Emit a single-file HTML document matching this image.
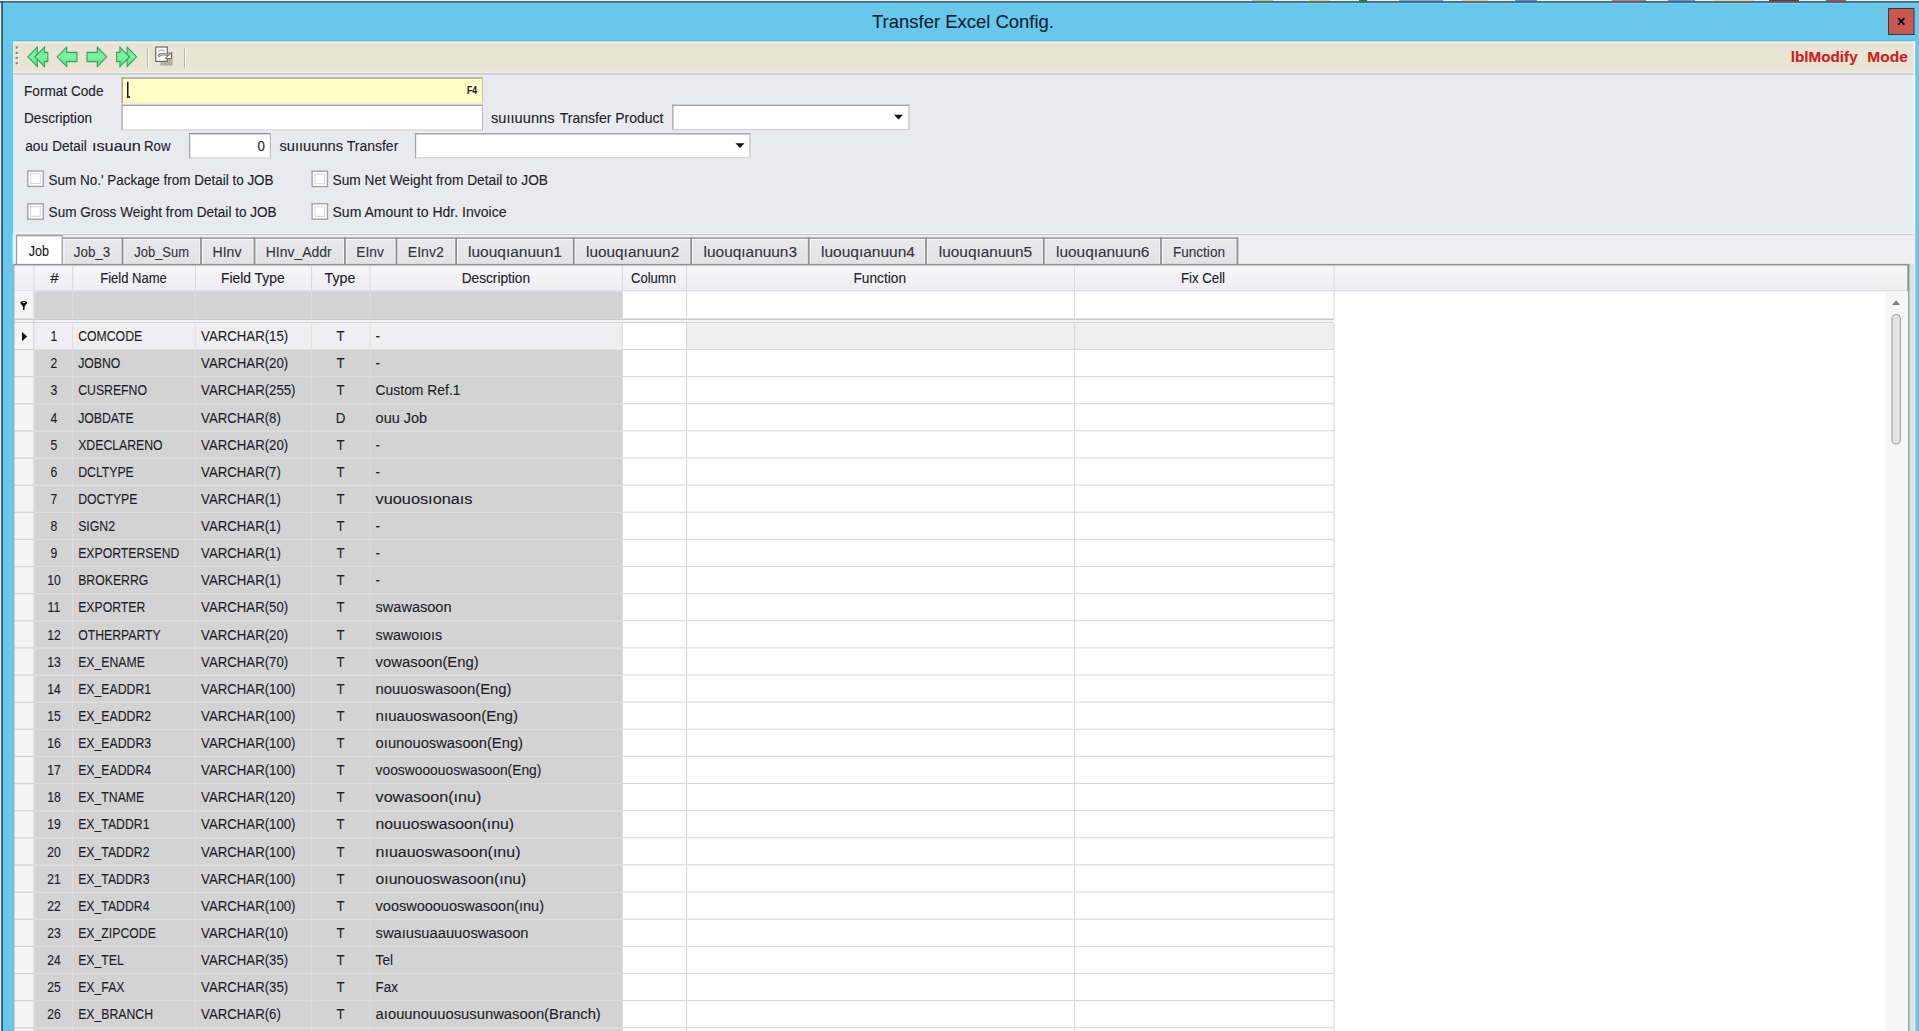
<!DOCTYPE html>
<html><head><meta charset="utf-8"><title>Transfer Excel Config.</title>
<style>html,body{margin:0;padding:0;overflow:hidden;background:#67c8eb}svg{display:block}text{font-family:"Liberation Sans", sans-serif;white-space:pre}</style>
</head><body>
<svg width="1919" height="1031" viewBox="0 0 1919 1031">
<rect x="0" y="0" width="1919" height="1031" fill="#67c8eb" />
<rect x="0" y="0" width="1919" height="1.4" fill="#eceef0" />
<rect x="0" y="0" width="1.4" height="1031" fill="#e6e8ea" />
<rect x="1252" y="0" width="21" height="1.4" fill="#b9c98a" />
<rect x="1309" y="0" width="20" height="1.4" fill="#e0d080" />
<rect x="1359" y="0" width="8" height="1.4" fill="#2a7a3a" />
<rect x="1399" y="0" width="44" height="1.4" fill="#7aa0d0" />
<rect x="1462" y="0" width="26" height="1.4" fill="#e4d28a" />
<rect x="1515" y="0" width="22" height="1.4" fill="#5a88c8" />
<rect x="1612" y="0" width="34" height="1.4" fill="#c87088" />
<rect x="1668" y="0" width="27" height="1.4" fill="#6a90c8" />
<rect x="1713" y="0" width="41" height="1.4" fill="#e8d890" />
<rect x="1769" y="0" width="30" height="1.4" fill="#9a2a2a" />
<rect x="1826" y="0" width="20" height="1.4" fill="#c04848" />
<rect x="0" y="1.3" width="1919" height="1.5" fill="#25485c" />
<rect x="3" y="2.8" width="1916" height="0.9" fill="#82d6f2" />
<rect x="1.3" y="1.3" width="1.5" height="1031" fill="#25485c" />
<rect x="1888.5" y="8.5" width="25.5" height="26" fill="#c9594e" stroke="#3a3a3a" stroke-width="1"/>
<path d="M1898.2 18.2 L1904.3 24.6 M1904.3 18.2 L1898.2 24.6" stroke="#000" stroke-width="1.9" stroke-linecap="butt"/>
<rect x="13" y="40.5" width="1902" height="1.5" fill="#5ab2d6" />
<rect x="13" y="41.3" width="1902" height="2.5" fill="#eef4ee" />
<rect x="13" y="42.8" width="1902" height="30" fill="#e9e4d3" />
<rect x="13" y="71.6" width="1902" height="2.4" fill="#f1f0ea" />
<rect x="13" y="73.2" width="1902" height="2.4" fill="#c4c5ca" />
<rect x="1913.2" y="41" width="2" height="34" fill="#f4f6f2" />
<rect x="15.8" y="46.5" width="2" height="2" fill="#8a8a8a" />
<rect x="16.8" y="47.5" width="2" height="2" fill="#ffffff" opacity="0.7"/>
<rect x="15.8" y="46.5" width="2" height="2" fill="#8a8a8a" />
<rect x="15.8" y="52" width="2" height="2" fill="#8a8a8a" />
<rect x="16.8" y="53" width="2" height="2" fill="#ffffff" opacity="0.7"/>
<rect x="15.8" y="52" width="2" height="2" fill="#8a8a8a" />
<rect x="15.8" y="57" width="2" height="2" fill="#8a8a8a" />
<rect x="16.8" y="58" width="2" height="2" fill="#ffffff" opacity="0.7"/>
<rect x="15.8" y="57" width="2" height="2" fill="#8a8a8a" />
<rect x="15.8" y="62.2" width="2" height="2" fill="#8a8a8a" />
<rect x="16.8" y="63.2" width="2" height="2" fill="#ffffff" opacity="0.7"/>
<rect x="15.8" y="62.2" width="2" height="2" fill="#8a8a8a" />
<path d="M27.8 56.8 L37.3 47.2 L37.3 54.6 L35.0 56.8 L37.3 59.0 L37.3 66.6 Z" fill="url(#gfill)" stroke="#3a9e5e" stroke-width="1.1" stroke-linejoin="miter"/>
<path d="M35.0 56.8 L44.5 47.2 L44.5 52.4 L47.8 52.4 L47.8 61.6 L44.5 61.6 L44.5 66.6 Z" fill="url(#gfill)" stroke="#3a9e5e" stroke-width="1.1" stroke-linejoin="miter"/>
<path d="M57.2 56.8 L66.7 47.2 L66.7 52.4 L77.0 52.4 L77.0 61.6 L66.7 61.6 L66.7 66.6 Z" fill="url(#gfill)" stroke="#3a9e5e" stroke-width="1.1" stroke-linejoin="miter"/>
<path d="M106.80 56.8 L97.30 47.2 L97.30 52.4 L87.00 52.4 L87.00 61.6 L97.30 61.6 L97.30 66.6 Z" fill="url(#gfill)" stroke="#3a9e5e" stroke-width="1.1" stroke-linejoin="miter"/>
<path d="M136.60 56.8 L127.10 47.2 L127.10 54.6 L129.40 56.8 L127.10 59.0 L127.10 66.6 Z" fill="url(#gfill)" stroke="#3a9e5e" stroke-width="1.1" stroke-linejoin="miter"/>
<path d="M129.40 56.8 L119.90 47.2 L119.90 52.4 L116.60 52.4 L116.60 61.6 L119.90 61.6 L119.90 66.6 Z" fill="url(#gfill)" stroke="#3a9e5e" stroke-width="1.1" stroke-linejoin="miter"/>
<rect x="147" y="48.3" width="1" height="19.5" fill="#b8b4a8" />
<rect x="148" y="48.3" width="1" height="19.5" fill="#ffffff" />
<rect x="184" y="48.3" width="1" height="19.5" fill="#b8b4a8" />
<rect x="185" y="48.3" width="1" height="19.5" fill="#ffffff" />
<rect x="160.3" y="52" width="12.3" height="13.6" fill="#b4b0a4"/>
<rect x="155.7" y="47" width="11.6" height="14.4" fill="#fdfdfd" stroke="#6c6c66" stroke-width="1.2"/>
<path d="M158 50.3 H165" stroke="#a8a8a8" stroke-width="1.1"/>
<path d="M158.3 56.5 Q161 52.6 167.5 54.8" stroke="#6e6e6e" stroke-width="2.4" fill="none"/>
<path d="M158.3 56.5 Q161 52.6 167.5 54.8" stroke="#dcdcdc" stroke-width="1.0" fill="none"/>
<path d="M165.4 58.4 L171.4 52.6 L171.4 58.4 Z" fill="#ffffff" stroke="#5a5a56" stroke-width="0.9"/>
<rect x="13" y="74.6" width="1902.2" height="960" fill="#e9eaef" />
<rect x="1914.2" y="74.6" width="1.0" height="960" fill="#e6f6fa" />
<rect x="121.4" y="77.2" width="361.6" height="26.299999999999997" fill="#ffffc6" />
<rect x="121.4" y="77.2" width="361.6" height="1.6" fill="#a8a89a" />
<rect x="121.4" y="77.2" width="1.6" height="26.299999999999997" fill="#a8a89e" />
<rect x="481.9" y="77.2" width="1.1" height="26.299999999999997" fill="#c4c4b4" />
<rect x="123.0" y="102.3" width="358.9" height="1.2" fill="#ececdc" />
<rect x="127" y="81.8" width="1.5" height="15.8" fill="#111" />
<rect x="127" y="96.2" width="3" height="1.5" fill="#111" />
<rect x="121.4" y="104.6" width="361.6" height="26.0" fill="#ffffff" />
<rect x="121.4" y="104.6" width="361.6" height="1.3" fill="#9a9aa0" />
<rect x="121.4" y="104.6" width="1.3" height="26.0" fill="#a4a4aa" />
<rect x="481.9" y="104.6" width="1.1" height="26.0" fill="#b8b8bc" />
<rect x="122.7" y="129.4" width="359.2" height="1.2" fill="#d0d0d4" />
<rect x="188.9" y="133.0" width="81.99999999999997" height="25.5" fill="#ffffff" />
<rect x="188.9" y="133.0" width="81.99999999999997" height="1.3" fill="#8e8e94" />
<rect x="188.9" y="133.0" width="1.3" height="25.5" fill="#a4a4aa" />
<rect x="269.79999999999995" y="133.0" width="1.1" height="25.5" fill="#b8b8bc" />
<rect x="190.20000000000002" y="157.3" width="79.59999999999998" height="1.2" fill="#d0d0d4" />
<rect x="672.2" y="104.6" width="237.29999999999995" height="25.5" fill="#ffffff" />
<rect x="672.2" y="104.6" width="237.29999999999995" height="1.3" fill="#9a9aa0" />
<rect x="672.2" y="104.6" width="1.3" height="25.5" fill="#a4a4aa" />
<rect x="908.4" y="104.6" width="1.1" height="25.5" fill="#b8b8bc" />
<rect x="673.5" y="128.9" width="234.89999999999995" height="1.2" fill="#d0d0d4" />
<path d="M894 114.8 L903 114.8 L898.5 119.5 Z" fill="#111"/>
<rect x="414.9" y="133.2" width="335.6" height="25.200000000000017" fill="#ffffff" />
<rect x="414.9" y="133.2" width="335.6" height="1.3" fill="#9a9aa0" />
<rect x="414.9" y="133.2" width="1.3" height="25.200000000000017" fill="#a4a4aa" />
<rect x="749.4" y="133.2" width="1.1" height="25.200000000000017" fill="#b8b8bc" />
<rect x="416.2" y="157.20000000000002" width="333.2" height="1.2" fill="#d0d0d4" />
<path d="M735.5 143.3 L744.5 143.3 L740 148 Z" fill="#111"/>
<rect x="27.8" y="171.0" width="15.4" height="15.4" fill="#ffffff" stroke="#9c9ca2" stroke-width="1.3"/>
<rect x="30.7" y="173.9" width="9.6" height="9.6" fill="#ffffff" stroke="#d6d6da" stroke-width="1"/>
<rect x="27.8" y="203.79999999999998" width="15.4" height="15.4" fill="#ffffff" stroke="#9c9ca2" stroke-width="1.3"/>
<rect x="30.7" y="206.7" width="9.6" height="9.6" fill="#ffffff" stroke="#d6d6da" stroke-width="1"/>
<rect x="312.1" y="171.2" width="15.4" height="15.4" fill="#ffffff" stroke="#9c9ca2" stroke-width="1.3"/>
<rect x="315.0" y="174.1" width="9.6" height="9.6" fill="#ffffff" stroke="#d6d6da" stroke-width="1"/>
<rect x="312.1" y="203.79999999999998" width="15.4" height="15.4" fill="#ffffff" stroke="#9c9ca2" stroke-width="1.3"/>
<rect x="315.0" y="206.7" width="9.6" height="9.6" fill="#ffffff" stroke="#d6d6da" stroke-width="1"/>
<rect x="13" y="232.6" width="1901" height="1.4" fill="#f3f3f5" />
<rect x="13" y="234.0" width="1901" height="1.2" fill="#c6c6ca" />
<rect x="13" y="235.2" width="1901" height="30" fill="#efeff1" />
<rect x="12.6" y="233.5" width="3.0" height="31.5" fill="#e6f5f8" />
<rect x="1912.4" y="74.6" width="1.6" height="160" fill="#f2f2f4" />
<defs><linearGradient id="tabg" x1="0" y1="0" x2="0" y2="1"><stop offset="0" stop-color="#eaeaee"/><stop offset="1" stop-color="#e2e2e6"/></linearGradient><linearGradient id="gfill" x1="0" y1="0" x2="0" y2="1"><stop offset="0" stop-color="#5ee88a"/><stop offset="0.5" stop-color="#7cf4a4"/><stop offset="1" stop-color="#52dc7e"/></linearGradient><linearGradient id="hdrg" x1="0" y1="0" x2="0" y2="1"><stop offset="0" stop-color="#f6f6f8"/><stop offset="1" stop-color="#eeeef2"/></linearGradient></defs>
<rect x="62.75" y="237.4" width="1174.65" height="27.5" fill="url(#tabg)" />
<rect x="62.75" y="237.4" width="1174.65" height="1.5" fill="#909096" />
<rect x="63.65" y="238.9" width="57.95" height="1.0" fill="#f8f8fa" />
<rect x="63.65" y="238.9" width="1.0" height="25.6" fill="#f8f8fa" />
<rect x="120.6" y="238.9" width="1.0" height="25.6" fill="#f6f6f8" />
<rect x="123.4" y="238.9" width="76.8" height="1.0" fill="#f8f8fa" />
<rect x="123.4" y="238.9" width="1.0" height="25.6" fill="#f8f8fa" />
<rect x="199.2" y="238.9" width="1.0" height="25.6" fill="#f6f6f8" />
<rect x="202.0" y="238.9" width="51.60000000000001" height="1.0" fill="#f8f8fa" />
<rect x="202.0" y="238.9" width="1.0" height="25.6" fill="#f8f8fa" />
<rect x="252.6" y="238.9" width="1.0" height="25.6" fill="#f6f6f8" />
<rect x="255.4" y="238.9" width="88.59999999999998" height="1.0" fill="#f8f8fa" />
<rect x="255.4" y="238.9" width="1.0" height="25.6" fill="#f8f8fa" />
<rect x="343.0" y="238.9" width="1.0" height="25.6" fill="#f6f6f8" />
<rect x="345.79999999999995" y="238.9" width="49.800000000000026" height="1.0" fill="#f8f8fa" />
<rect x="345.79999999999995" y="238.9" width="1.0" height="25.6" fill="#f8f8fa" />
<rect x="394.6" y="238.9" width="1.0" height="25.6" fill="#f6f6f8" />
<rect x="397.4" y="238.9" width="57.800000000000026" height="1.0" fill="#f8f8fa" />
<rect x="397.4" y="238.9" width="1.0" height="25.6" fill="#f8f8fa" />
<rect x="454.20000000000005" y="238.9" width="1.0" height="25.6" fill="#f6f6f8" />
<rect x="457.0" y="238.9" width="115.80000000000003" height="1.0" fill="#f8f8fa" />
<rect x="457.0" y="238.9" width="1.0" height="25.6" fill="#f8f8fa" />
<rect x="571.8000000000001" y="238.9" width="1.0" height="25.6" fill="#f6f6f8" />
<rect x="574.6" y="238.9" width="115.59999999999998" height="1.0" fill="#f8f8fa" />
<rect x="574.6" y="238.9" width="1.0" height="25.6" fill="#f8f8fa" />
<rect x="689.2" y="238.9" width="1.0" height="25.6" fill="#f6f6f8" />
<rect x="692.0" y="238.9" width="115.80000000000003" height="1.0" fill="#f8f8fa" />
<rect x="692.0" y="238.9" width="1.0" height="25.6" fill="#f8f8fa" />
<rect x="806.8000000000001" y="238.9" width="1.0" height="25.6" fill="#f6f6f8" />
<rect x="809.6" y="238.9" width="115.49999999999996" height="1.0" fill="#f8f8fa" />
<rect x="809.6" y="238.9" width="1.0" height="25.6" fill="#f8f8fa" />
<rect x="924.1" y="238.9" width="1.0" height="25.6" fill="#f6f6f8" />
<rect x="926.9" y="238.9" width="115.99999999999996" height="1.0" fill="#f8f8fa" />
<rect x="926.9" y="238.9" width="1.0" height="25.6" fill="#f8f8fa" />
<rect x="1041.8999999999999" y="238.9" width="1.0" height="25.6" fill="#f6f6f8" />
<rect x="1044.7" y="238.9" width="115.49999999999996" height="1.0" fill="#f8f8fa" />
<rect x="1044.7" y="238.9" width="1.0" height="25.6" fill="#f8f8fa" />
<rect x="1159.1999999999998" y="238.9" width="1.0" height="25.6" fill="#f6f6f8" />
<rect x="1162.0" y="238.9" width="74.50000000000018" height="1.0" fill="#f8f8fa" />
<rect x="1162.0" y="238.9" width="1.0" height="25.6" fill="#f8f8fa" />
<rect x="1235.5" y="238.9" width="1.0" height="25.6" fill="#f6f6f8" />
<rect x="121.6" y="237.4" width="1.8" height="27.5" fill="#909096" />
<rect x="200.2" y="237.4" width="1.8" height="27.5" fill="#909096" />
<rect x="253.6" y="237.4" width="1.8" height="27.5" fill="#909096" />
<rect x="344.0" y="237.4" width="1.8" height="27.5" fill="#909096" />
<rect x="395.6" y="237.4" width="1.8" height="27.5" fill="#909096" />
<rect x="455.20000000000005" y="237.4" width="1.8" height="27.5" fill="#909096" />
<rect x="572.8000000000001" y="237.4" width="1.8" height="27.5" fill="#909096" />
<rect x="690.2" y="237.4" width="1.8" height="27.5" fill="#909096" />
<rect x="807.8000000000001" y="237.4" width="1.8" height="27.5" fill="#909096" />
<rect x="925.1" y="237.4" width="1.8" height="27.5" fill="#909096" />
<rect x="1042.8999999999999" y="237.4" width="1.8" height="27.5" fill="#909096" />
<rect x="1160.1999999999998" y="237.4" width="1.8" height="27.5" fill="#909096" />
<rect x="1236.5" y="237.4" width="1.8" height="27.5" fill="#909096" />
<rect x="16.5" y="235.7" width="45.65" height="30" fill="#ffffff" stroke="#9a9aa0" stroke-width="1.2"/>
<rect x="17.1" y="263" width="44.45" height="4" fill="#ffffff" />
<rect x="13.3" y="264.2" width="1896.2" height="770" fill="#ffffff" />
<rect x="14.5" y="265.5" width="1893.7" height="25.3" fill="url(#hdrg)" />
<rect x="33.5" y="265.5" width="1" height="25.3" fill="#d8d8de" />
<rect x="72.1" y="265.5" width="1" height="25.3" fill="#d8d8de" />
<rect x="194.9" y="265.5" width="1" height="25.3" fill="#d8d8de" />
<rect x="311.1" y="265.5" width="1" height="25.3" fill="#d8d8de" />
<rect x="369.5" y="265.5" width="1" height="25.3" fill="#d8d8de" />
<rect x="621.8" y="265.5" width="1" height="25.3" fill="#d8d8de" />
<rect x="686.1" y="265.5" width="1" height="25.3" fill="#d8d8de" />
<rect x="1074.1" y="265.5" width="1" height="25.3" fill="#d8d8de" />
<rect x="1333.5" y="265.5" width="1" height="25.3" fill="#d8d8de" />
<rect x="14.5" y="290.4" width="1893.7" height="0.9" fill="#d4d4da" />
<rect x="14.5" y="291.3" width="19" height="740" fill="#f4f4f5" />
<rect x="34.5" y="291.3" width="587.8" height="27.2" fill="#d3d3d4" />
<rect x="72.1" y="291.3" width="1" height="27.2" fill="#dcdcde" />
<rect x="194.9" y="291.3" width="1" height="27.2" fill="#dcdcde" />
<rect x="311.1" y="291.3" width="1" height="27.2" fill="#dcdcde" />
<rect x="369.5" y="291.3" width="1" height="27.2" fill="#dcdcde" />
<rect x="621.8" y="291.3" width="1" height="27.2" fill="#d6d6dc" />
<rect x="686.1" y="291.3" width="1" height="27.2" fill="#d6d6dc" />
<rect x="1074.1" y="291.3" width="1" height="27.2" fill="#d6d6dc" />
<rect x="1333.5" y="291.3" width="1" height="27.2" fill="#d6d6dc" />
<path d="M20.5 302.8 L23.0 306.8 L23.1 310 L24.5 310 L24.6 306.8 L27.0 302.8 Z" fill="#0c0c14"/>
<ellipse cx="23.75" cy="302.8" rx="3.3" ry="1.9" fill="#0c0c14"/>
<ellipse cx="23.75" cy="302.5" rx="1.3" ry="0.7" fill="#c8c8d0"/>
<rect x="14.5" y="318.5" width="1319.5" height="1.6" fill="#c9c9ce" />
<rect x="14.5" y="320.1" width="1319.5" height="2.0" fill="#f2f2f4" />
<rect x="14.5" y="322.0" width="1319.5" height="0.9" fill="#d0d0d4" />
<rect x="34.5" y="323.2" width="1299.5" height="26.230000000000018" fill="#efeff2" />
<rect x="622.3" y="323.2" width="64.30000000000007" height="26.230000000000018" fill="#ffffff" />
<rect x="14.5" y="348.93" width="19" height="1.2" fill="#d2d2d6" />
<rect x="34.5" y="348.93" width="587.8" height="1.0" fill="#e0e0e4" />
<rect x="622.3" y="348.93" width="711.7" height="1.0" fill="#d8d8dc" />
<rect x="72.1" y="323.2" width="1" height="26.230000000000018" fill="#e2e2e6" />
<rect x="194.9" y="323.2" width="1" height="26.230000000000018" fill="#e2e2e6" />
<rect x="311.1" y="323.2" width="1" height="26.230000000000018" fill="#e2e2e6" />
<rect x="369.5" y="323.2" width="1" height="26.230000000000018" fill="#e2e2e6" />
<rect x="621.8" y="323.2" width="1" height="26.230000000000018" fill="#d6d6dc" />
<rect x="686.1" y="323.2" width="1" height="26.230000000000018" fill="#d6d6dc" />
<rect x="1074.1" y="323.2" width="1" height="26.230000000000018" fill="#d6d6dc" />
<rect x="1333.5" y="323.2" width="1" height="26.230000000000018" fill="#d6d6dc" />
<rect x="34.5" y="349.93" width="587.8" height="26.629999999999995" fill="#d3d3d4" />
<rect x="14.5" y="376.06" width="19" height="1.2" fill="#d2d2d6" />
<rect x="34.5" y="376.06" width="587.8" height="1.0" fill="#dcdcde" />
<rect x="622.3" y="376.06" width="711.7" height="1.0" fill="#d8d8dc" />
<rect x="72.1" y="349.93" width="1" height="26.629999999999995" fill="#dcdcde" />
<rect x="194.9" y="349.93" width="1" height="26.629999999999995" fill="#dcdcde" />
<rect x="311.1" y="349.93" width="1" height="26.629999999999995" fill="#dcdcde" />
<rect x="369.5" y="349.93" width="1" height="26.629999999999995" fill="#dcdcde" />
<rect x="621.8" y="349.93" width="1" height="26.629999999999995" fill="#d6d6dc" />
<rect x="686.1" y="349.93" width="1" height="26.629999999999995" fill="#d6d6dc" />
<rect x="1074.1" y="349.93" width="1" height="26.629999999999995" fill="#d6d6dc" />
<rect x="1333.5" y="349.93" width="1" height="26.629999999999995" fill="#d6d6dc" />
<rect x="34.5" y="377.06" width="587.8" height="26.629999999999995" fill="#d3d3d4" />
<rect x="14.5" y="403.19" width="19" height="1.2" fill="#d2d2d6" />
<rect x="34.5" y="403.19" width="587.8" height="1.0" fill="#dcdcde" />
<rect x="622.3" y="403.19" width="711.7" height="1.0" fill="#d8d8dc" />
<rect x="72.1" y="377.06" width="1" height="26.629999999999995" fill="#dcdcde" />
<rect x="194.9" y="377.06" width="1" height="26.629999999999995" fill="#dcdcde" />
<rect x="311.1" y="377.06" width="1" height="26.629999999999995" fill="#dcdcde" />
<rect x="369.5" y="377.06" width="1" height="26.629999999999995" fill="#dcdcde" />
<rect x="621.8" y="377.06" width="1" height="26.629999999999995" fill="#d6d6dc" />
<rect x="686.1" y="377.06" width="1" height="26.629999999999995" fill="#d6d6dc" />
<rect x="1074.1" y="377.06" width="1" height="26.629999999999995" fill="#d6d6dc" />
<rect x="1333.5" y="377.06" width="1" height="26.629999999999995" fill="#d6d6dc" />
<rect x="34.5" y="404.19" width="587.8" height="26.629999999999995" fill="#d3d3d4" />
<rect x="14.5" y="430.32" width="19" height="1.2" fill="#d2d2d6" />
<rect x="34.5" y="430.32" width="587.8" height="1.0" fill="#dcdcde" />
<rect x="622.3" y="430.32" width="711.7" height="1.0" fill="#d8d8dc" />
<rect x="72.1" y="404.19" width="1" height="26.629999999999995" fill="#dcdcde" />
<rect x="194.9" y="404.19" width="1" height="26.629999999999995" fill="#dcdcde" />
<rect x="311.1" y="404.19" width="1" height="26.629999999999995" fill="#dcdcde" />
<rect x="369.5" y="404.19" width="1" height="26.629999999999995" fill="#dcdcde" />
<rect x="621.8" y="404.19" width="1" height="26.629999999999995" fill="#d6d6dc" />
<rect x="686.1" y="404.19" width="1" height="26.629999999999995" fill="#d6d6dc" />
<rect x="1074.1" y="404.19" width="1" height="26.629999999999995" fill="#d6d6dc" />
<rect x="1333.5" y="404.19" width="1" height="26.629999999999995" fill="#d6d6dc" />
<rect x="34.5" y="431.32" width="587.8" height="26.630000000000052" fill="#d3d3d4" />
<rect x="14.5" y="457.45000000000005" width="19" height="1.2" fill="#d2d2d6" />
<rect x="34.5" y="457.45000000000005" width="587.8" height="1.0" fill="#dcdcde" />
<rect x="622.3" y="457.45000000000005" width="711.7" height="1.0" fill="#d8d8dc" />
<rect x="72.1" y="431.32" width="1" height="26.630000000000052" fill="#dcdcde" />
<rect x="194.9" y="431.32" width="1" height="26.630000000000052" fill="#dcdcde" />
<rect x="311.1" y="431.32" width="1" height="26.630000000000052" fill="#dcdcde" />
<rect x="369.5" y="431.32" width="1" height="26.630000000000052" fill="#dcdcde" />
<rect x="621.8" y="431.32" width="1" height="26.630000000000052" fill="#d6d6dc" />
<rect x="686.1" y="431.32" width="1" height="26.630000000000052" fill="#d6d6dc" />
<rect x="1074.1" y="431.32" width="1" height="26.630000000000052" fill="#d6d6dc" />
<rect x="1333.5" y="431.32" width="1" height="26.630000000000052" fill="#d6d6dc" />
<rect x="34.5" y="458.45000000000005" width="587.8" height="26.629999999999995" fill="#d3d3d4" />
<rect x="14.5" y="484.58000000000004" width="19" height="1.2" fill="#d2d2d6" />
<rect x="34.5" y="484.58000000000004" width="587.8" height="1.0" fill="#dcdcde" />
<rect x="622.3" y="484.58000000000004" width="711.7" height="1.0" fill="#d8d8dc" />
<rect x="72.1" y="458.45000000000005" width="1" height="26.629999999999995" fill="#dcdcde" />
<rect x="194.9" y="458.45000000000005" width="1" height="26.629999999999995" fill="#dcdcde" />
<rect x="311.1" y="458.45000000000005" width="1" height="26.629999999999995" fill="#dcdcde" />
<rect x="369.5" y="458.45000000000005" width="1" height="26.629999999999995" fill="#dcdcde" />
<rect x="621.8" y="458.45000000000005" width="1" height="26.629999999999995" fill="#d6d6dc" />
<rect x="686.1" y="458.45000000000005" width="1" height="26.629999999999995" fill="#d6d6dc" />
<rect x="1074.1" y="458.45000000000005" width="1" height="26.629999999999995" fill="#d6d6dc" />
<rect x="1333.5" y="458.45000000000005" width="1" height="26.629999999999995" fill="#d6d6dc" />
<rect x="34.5" y="485.58000000000004" width="587.8" height="26.629999999999995" fill="#d3d3d4" />
<rect x="14.5" y="511.71000000000004" width="19" height="1.2" fill="#d2d2d6" />
<rect x="34.5" y="511.71000000000004" width="587.8" height="1.0" fill="#dcdcde" />
<rect x="622.3" y="511.71000000000004" width="711.7" height="1.0" fill="#d8d8dc" />
<rect x="72.1" y="485.58000000000004" width="1" height="26.629999999999995" fill="#dcdcde" />
<rect x="194.9" y="485.58000000000004" width="1" height="26.629999999999995" fill="#dcdcde" />
<rect x="311.1" y="485.58000000000004" width="1" height="26.629999999999995" fill="#dcdcde" />
<rect x="369.5" y="485.58000000000004" width="1" height="26.629999999999995" fill="#dcdcde" />
<rect x="621.8" y="485.58000000000004" width="1" height="26.629999999999995" fill="#d6d6dc" />
<rect x="686.1" y="485.58000000000004" width="1" height="26.629999999999995" fill="#d6d6dc" />
<rect x="1074.1" y="485.58000000000004" width="1" height="26.629999999999995" fill="#d6d6dc" />
<rect x="1333.5" y="485.58000000000004" width="1" height="26.629999999999995" fill="#d6d6dc" />
<rect x="34.5" y="512.71" width="587.8" height="26.629999999999995" fill="#d3d3d4" />
<rect x="14.5" y="538.84" width="19" height="1.2" fill="#d2d2d6" />
<rect x="34.5" y="538.84" width="587.8" height="1.0" fill="#dcdcde" />
<rect x="622.3" y="538.84" width="711.7" height="1.0" fill="#d8d8dc" />
<rect x="72.1" y="512.71" width="1" height="26.629999999999995" fill="#dcdcde" />
<rect x="194.9" y="512.71" width="1" height="26.629999999999995" fill="#dcdcde" />
<rect x="311.1" y="512.71" width="1" height="26.629999999999995" fill="#dcdcde" />
<rect x="369.5" y="512.71" width="1" height="26.629999999999995" fill="#dcdcde" />
<rect x="621.8" y="512.71" width="1" height="26.629999999999995" fill="#d6d6dc" />
<rect x="686.1" y="512.71" width="1" height="26.629999999999995" fill="#d6d6dc" />
<rect x="1074.1" y="512.71" width="1" height="26.629999999999995" fill="#d6d6dc" />
<rect x="1333.5" y="512.71" width="1" height="26.629999999999995" fill="#d6d6dc" />
<rect x="34.5" y="539.84" width="587.8" height="26.629999999999995" fill="#d3d3d4" />
<rect x="14.5" y="565.97" width="19" height="1.2" fill="#d2d2d6" />
<rect x="34.5" y="565.97" width="587.8" height="1.0" fill="#dcdcde" />
<rect x="622.3" y="565.97" width="711.7" height="1.0" fill="#d8d8dc" />
<rect x="72.1" y="539.84" width="1" height="26.629999999999995" fill="#dcdcde" />
<rect x="194.9" y="539.84" width="1" height="26.629999999999995" fill="#dcdcde" />
<rect x="311.1" y="539.84" width="1" height="26.629999999999995" fill="#dcdcde" />
<rect x="369.5" y="539.84" width="1" height="26.629999999999995" fill="#dcdcde" />
<rect x="621.8" y="539.84" width="1" height="26.629999999999995" fill="#d6d6dc" />
<rect x="686.1" y="539.84" width="1" height="26.629999999999995" fill="#d6d6dc" />
<rect x="1074.1" y="539.84" width="1" height="26.629999999999995" fill="#d6d6dc" />
<rect x="1333.5" y="539.84" width="1" height="26.629999999999995" fill="#d6d6dc" />
<rect x="34.5" y="566.97" width="587.8" height="26.629999999999995" fill="#d3d3d4" />
<rect x="14.5" y="593.1" width="19" height="1.2" fill="#d2d2d6" />
<rect x="34.5" y="593.1" width="587.8" height="1.0" fill="#dcdcde" />
<rect x="622.3" y="593.1" width="711.7" height="1.0" fill="#d8d8dc" />
<rect x="72.1" y="566.97" width="1" height="26.629999999999995" fill="#dcdcde" />
<rect x="194.9" y="566.97" width="1" height="26.629999999999995" fill="#dcdcde" />
<rect x="311.1" y="566.97" width="1" height="26.629999999999995" fill="#dcdcde" />
<rect x="369.5" y="566.97" width="1" height="26.629999999999995" fill="#dcdcde" />
<rect x="621.8" y="566.97" width="1" height="26.629999999999995" fill="#d6d6dc" />
<rect x="686.1" y="566.97" width="1" height="26.629999999999995" fill="#d6d6dc" />
<rect x="1074.1" y="566.97" width="1" height="26.629999999999995" fill="#d6d6dc" />
<rect x="1333.5" y="566.97" width="1" height="26.629999999999995" fill="#d6d6dc" />
<rect x="34.5" y="594.1" width="587.8" height="26.629999999999995" fill="#d3d3d4" />
<rect x="14.5" y="620.23" width="19" height="1.2" fill="#d2d2d6" />
<rect x="34.5" y="620.23" width="587.8" height="1.0" fill="#dcdcde" />
<rect x="622.3" y="620.23" width="711.7" height="1.0" fill="#d8d8dc" />
<rect x="72.1" y="594.1" width="1" height="26.629999999999995" fill="#dcdcde" />
<rect x="194.9" y="594.1" width="1" height="26.629999999999995" fill="#dcdcde" />
<rect x="311.1" y="594.1" width="1" height="26.629999999999995" fill="#dcdcde" />
<rect x="369.5" y="594.1" width="1" height="26.629999999999995" fill="#dcdcde" />
<rect x="621.8" y="594.1" width="1" height="26.629999999999995" fill="#d6d6dc" />
<rect x="686.1" y="594.1" width="1" height="26.629999999999995" fill="#d6d6dc" />
<rect x="1074.1" y="594.1" width="1" height="26.629999999999995" fill="#d6d6dc" />
<rect x="1333.5" y="594.1" width="1" height="26.629999999999995" fill="#d6d6dc" />
<rect x="34.5" y="621.23" width="587.8" height="26.629999999999995" fill="#d3d3d4" />
<rect x="14.5" y="647.36" width="19" height="1.2" fill="#d2d2d6" />
<rect x="34.5" y="647.36" width="587.8" height="1.0" fill="#dcdcde" />
<rect x="622.3" y="647.36" width="711.7" height="1.0" fill="#d8d8dc" />
<rect x="72.1" y="621.23" width="1" height="26.629999999999995" fill="#dcdcde" />
<rect x="194.9" y="621.23" width="1" height="26.629999999999995" fill="#dcdcde" />
<rect x="311.1" y="621.23" width="1" height="26.629999999999995" fill="#dcdcde" />
<rect x="369.5" y="621.23" width="1" height="26.629999999999995" fill="#dcdcde" />
<rect x="621.8" y="621.23" width="1" height="26.629999999999995" fill="#d6d6dc" />
<rect x="686.1" y="621.23" width="1" height="26.629999999999995" fill="#d6d6dc" />
<rect x="1074.1" y="621.23" width="1" height="26.629999999999995" fill="#d6d6dc" />
<rect x="1333.5" y="621.23" width="1" height="26.629999999999995" fill="#d6d6dc" />
<rect x="34.5" y="648.36" width="587.8" height="26.629999999999995" fill="#d3d3d4" />
<rect x="14.5" y="674.49" width="19" height="1.2" fill="#d2d2d6" />
<rect x="34.5" y="674.49" width="587.8" height="1.0" fill="#dcdcde" />
<rect x="622.3" y="674.49" width="711.7" height="1.0" fill="#d8d8dc" />
<rect x="72.1" y="648.36" width="1" height="26.629999999999995" fill="#dcdcde" />
<rect x="194.9" y="648.36" width="1" height="26.629999999999995" fill="#dcdcde" />
<rect x="311.1" y="648.36" width="1" height="26.629999999999995" fill="#dcdcde" />
<rect x="369.5" y="648.36" width="1" height="26.629999999999995" fill="#dcdcde" />
<rect x="621.8" y="648.36" width="1" height="26.629999999999995" fill="#d6d6dc" />
<rect x="686.1" y="648.36" width="1" height="26.629999999999995" fill="#d6d6dc" />
<rect x="1074.1" y="648.36" width="1" height="26.629999999999995" fill="#d6d6dc" />
<rect x="1333.5" y="648.36" width="1" height="26.629999999999995" fill="#d6d6dc" />
<rect x="34.5" y="675.49" width="587.8" height="26.629999999999995" fill="#d3d3d4" />
<rect x="14.5" y="701.62" width="19" height="1.2" fill="#d2d2d6" />
<rect x="34.5" y="701.62" width="587.8" height="1.0" fill="#dcdcde" />
<rect x="622.3" y="701.62" width="711.7" height="1.0" fill="#d8d8dc" />
<rect x="72.1" y="675.49" width="1" height="26.629999999999995" fill="#dcdcde" />
<rect x="194.9" y="675.49" width="1" height="26.629999999999995" fill="#dcdcde" />
<rect x="311.1" y="675.49" width="1" height="26.629999999999995" fill="#dcdcde" />
<rect x="369.5" y="675.49" width="1" height="26.629999999999995" fill="#dcdcde" />
<rect x="621.8" y="675.49" width="1" height="26.629999999999995" fill="#d6d6dc" />
<rect x="686.1" y="675.49" width="1" height="26.629999999999995" fill="#d6d6dc" />
<rect x="1074.1" y="675.49" width="1" height="26.629999999999995" fill="#d6d6dc" />
<rect x="1333.5" y="675.49" width="1" height="26.629999999999995" fill="#d6d6dc" />
<rect x="34.5" y="702.62" width="587.8" height="26.629999999999995" fill="#d3d3d4" />
<rect x="14.5" y="728.75" width="19" height="1.2" fill="#d2d2d6" />
<rect x="34.5" y="728.75" width="587.8" height="1.0" fill="#dcdcde" />
<rect x="622.3" y="728.75" width="711.7" height="1.0" fill="#d8d8dc" />
<rect x="72.1" y="702.62" width="1" height="26.629999999999995" fill="#dcdcde" />
<rect x="194.9" y="702.62" width="1" height="26.629999999999995" fill="#dcdcde" />
<rect x="311.1" y="702.62" width="1" height="26.629999999999995" fill="#dcdcde" />
<rect x="369.5" y="702.62" width="1" height="26.629999999999995" fill="#dcdcde" />
<rect x="621.8" y="702.62" width="1" height="26.629999999999995" fill="#d6d6dc" />
<rect x="686.1" y="702.62" width="1" height="26.629999999999995" fill="#d6d6dc" />
<rect x="1074.1" y="702.62" width="1" height="26.629999999999995" fill="#d6d6dc" />
<rect x="1333.5" y="702.62" width="1" height="26.629999999999995" fill="#d6d6dc" />
<rect x="34.5" y="729.75" width="587.8" height="26.629999999999995" fill="#d3d3d4" />
<rect x="14.5" y="755.88" width="19" height="1.2" fill="#d2d2d6" />
<rect x="34.5" y="755.88" width="587.8" height="1.0" fill="#dcdcde" />
<rect x="622.3" y="755.88" width="711.7" height="1.0" fill="#d8d8dc" />
<rect x="72.1" y="729.75" width="1" height="26.629999999999995" fill="#dcdcde" />
<rect x="194.9" y="729.75" width="1" height="26.629999999999995" fill="#dcdcde" />
<rect x="311.1" y="729.75" width="1" height="26.629999999999995" fill="#dcdcde" />
<rect x="369.5" y="729.75" width="1" height="26.629999999999995" fill="#dcdcde" />
<rect x="621.8" y="729.75" width="1" height="26.629999999999995" fill="#d6d6dc" />
<rect x="686.1" y="729.75" width="1" height="26.629999999999995" fill="#d6d6dc" />
<rect x="1074.1" y="729.75" width="1" height="26.629999999999995" fill="#d6d6dc" />
<rect x="1333.5" y="729.75" width="1" height="26.629999999999995" fill="#d6d6dc" />
<rect x="34.5" y="756.88" width="587.8" height="26.629999999999995" fill="#d3d3d4" />
<rect x="14.5" y="783.01" width="19" height="1.2" fill="#d2d2d6" />
<rect x="34.5" y="783.01" width="587.8" height="1.0" fill="#dcdcde" />
<rect x="622.3" y="783.01" width="711.7" height="1.0" fill="#d8d8dc" />
<rect x="72.1" y="756.88" width="1" height="26.629999999999995" fill="#dcdcde" />
<rect x="194.9" y="756.88" width="1" height="26.629999999999995" fill="#dcdcde" />
<rect x="311.1" y="756.88" width="1" height="26.629999999999995" fill="#dcdcde" />
<rect x="369.5" y="756.88" width="1" height="26.629999999999995" fill="#dcdcde" />
<rect x="621.8" y="756.88" width="1" height="26.629999999999995" fill="#d6d6dc" />
<rect x="686.1" y="756.88" width="1" height="26.629999999999995" fill="#d6d6dc" />
<rect x="1074.1" y="756.88" width="1" height="26.629999999999995" fill="#d6d6dc" />
<rect x="1333.5" y="756.88" width="1" height="26.629999999999995" fill="#d6d6dc" />
<rect x="34.5" y="784.01" width="587.8" height="26.629999999999995" fill="#d3d3d4" />
<rect x="14.5" y="810.14" width="19" height="1.2" fill="#d2d2d6" />
<rect x="34.5" y="810.14" width="587.8" height="1.0" fill="#dcdcde" />
<rect x="622.3" y="810.14" width="711.7" height="1.0" fill="#d8d8dc" />
<rect x="72.1" y="784.01" width="1" height="26.629999999999995" fill="#dcdcde" />
<rect x="194.9" y="784.01" width="1" height="26.629999999999995" fill="#dcdcde" />
<rect x="311.1" y="784.01" width="1" height="26.629999999999995" fill="#dcdcde" />
<rect x="369.5" y="784.01" width="1" height="26.629999999999995" fill="#dcdcde" />
<rect x="621.8" y="784.01" width="1" height="26.629999999999995" fill="#d6d6dc" />
<rect x="686.1" y="784.01" width="1" height="26.629999999999995" fill="#d6d6dc" />
<rect x="1074.1" y="784.01" width="1" height="26.629999999999995" fill="#d6d6dc" />
<rect x="1333.5" y="784.01" width="1" height="26.629999999999995" fill="#d6d6dc" />
<rect x="34.5" y="811.14" width="587.8" height="26.629999999999995" fill="#d3d3d4" />
<rect x="14.5" y="837.27" width="19" height="1.2" fill="#d2d2d6" />
<rect x="34.5" y="837.27" width="587.8" height="1.0" fill="#dcdcde" />
<rect x="622.3" y="837.27" width="711.7" height="1.0" fill="#d8d8dc" />
<rect x="72.1" y="811.14" width="1" height="26.629999999999995" fill="#dcdcde" />
<rect x="194.9" y="811.14" width="1" height="26.629999999999995" fill="#dcdcde" />
<rect x="311.1" y="811.14" width="1" height="26.629999999999995" fill="#dcdcde" />
<rect x="369.5" y="811.14" width="1" height="26.629999999999995" fill="#dcdcde" />
<rect x="621.8" y="811.14" width="1" height="26.629999999999995" fill="#d6d6dc" />
<rect x="686.1" y="811.14" width="1" height="26.629999999999995" fill="#d6d6dc" />
<rect x="1074.1" y="811.14" width="1" height="26.629999999999995" fill="#d6d6dc" />
<rect x="1333.5" y="811.14" width="1" height="26.629999999999995" fill="#d6d6dc" />
<rect x="34.5" y="838.27" width="587.8" height="26.63000000000011" fill="#d3d3d4" />
<rect x="14.5" y="864.4000000000001" width="19" height="1.2" fill="#d2d2d6" />
<rect x="34.5" y="864.4000000000001" width="587.8" height="1.0" fill="#dcdcde" />
<rect x="622.3" y="864.4000000000001" width="711.7" height="1.0" fill="#d8d8dc" />
<rect x="72.1" y="838.27" width="1" height="26.63000000000011" fill="#dcdcde" />
<rect x="194.9" y="838.27" width="1" height="26.63000000000011" fill="#dcdcde" />
<rect x="311.1" y="838.27" width="1" height="26.63000000000011" fill="#dcdcde" />
<rect x="369.5" y="838.27" width="1" height="26.63000000000011" fill="#dcdcde" />
<rect x="621.8" y="838.27" width="1" height="26.63000000000011" fill="#d6d6dc" />
<rect x="686.1" y="838.27" width="1" height="26.63000000000011" fill="#d6d6dc" />
<rect x="1074.1" y="838.27" width="1" height="26.63000000000011" fill="#d6d6dc" />
<rect x="1333.5" y="838.27" width="1" height="26.63000000000011" fill="#d6d6dc" />
<rect x="34.5" y="865.4000000000001" width="587.8" height="26.62999999999988" fill="#d3d3d4" />
<rect x="14.5" y="891.53" width="19" height="1.2" fill="#d2d2d6" />
<rect x="34.5" y="891.53" width="587.8" height="1.0" fill="#dcdcde" />
<rect x="622.3" y="891.53" width="711.7" height="1.0" fill="#d8d8dc" />
<rect x="72.1" y="865.4000000000001" width="1" height="26.62999999999988" fill="#dcdcde" />
<rect x="194.9" y="865.4000000000001" width="1" height="26.62999999999988" fill="#dcdcde" />
<rect x="311.1" y="865.4000000000001" width="1" height="26.62999999999988" fill="#dcdcde" />
<rect x="369.5" y="865.4000000000001" width="1" height="26.62999999999988" fill="#dcdcde" />
<rect x="621.8" y="865.4000000000001" width="1" height="26.62999999999988" fill="#d6d6dc" />
<rect x="686.1" y="865.4000000000001" width="1" height="26.62999999999988" fill="#d6d6dc" />
<rect x="1074.1" y="865.4000000000001" width="1" height="26.62999999999988" fill="#d6d6dc" />
<rect x="1333.5" y="865.4000000000001" width="1" height="26.62999999999988" fill="#d6d6dc" />
<rect x="34.5" y="892.53" width="587.8" height="26.63000000000011" fill="#d3d3d4" />
<rect x="14.5" y="918.6600000000001" width="19" height="1.2" fill="#d2d2d6" />
<rect x="34.5" y="918.6600000000001" width="587.8" height="1.0" fill="#dcdcde" />
<rect x="622.3" y="918.6600000000001" width="711.7" height="1.0" fill="#d8d8dc" />
<rect x="72.1" y="892.53" width="1" height="26.63000000000011" fill="#dcdcde" />
<rect x="194.9" y="892.53" width="1" height="26.63000000000011" fill="#dcdcde" />
<rect x="311.1" y="892.53" width="1" height="26.63000000000011" fill="#dcdcde" />
<rect x="369.5" y="892.53" width="1" height="26.63000000000011" fill="#dcdcde" />
<rect x="621.8" y="892.53" width="1" height="26.63000000000011" fill="#d6d6dc" />
<rect x="686.1" y="892.53" width="1" height="26.63000000000011" fill="#d6d6dc" />
<rect x="1074.1" y="892.53" width="1" height="26.63000000000011" fill="#d6d6dc" />
<rect x="1333.5" y="892.53" width="1" height="26.63000000000011" fill="#d6d6dc" />
<rect x="34.5" y="919.6600000000001" width="587.8" height="26.62999999999988" fill="#d3d3d4" />
<rect x="14.5" y="945.79" width="19" height="1.2" fill="#d2d2d6" />
<rect x="34.5" y="945.79" width="587.8" height="1.0" fill="#dcdcde" />
<rect x="622.3" y="945.79" width="711.7" height="1.0" fill="#d8d8dc" />
<rect x="72.1" y="919.6600000000001" width="1" height="26.62999999999988" fill="#dcdcde" />
<rect x="194.9" y="919.6600000000001" width="1" height="26.62999999999988" fill="#dcdcde" />
<rect x="311.1" y="919.6600000000001" width="1" height="26.62999999999988" fill="#dcdcde" />
<rect x="369.5" y="919.6600000000001" width="1" height="26.62999999999988" fill="#dcdcde" />
<rect x="621.8" y="919.6600000000001" width="1" height="26.62999999999988" fill="#d6d6dc" />
<rect x="686.1" y="919.6600000000001" width="1" height="26.62999999999988" fill="#d6d6dc" />
<rect x="1074.1" y="919.6600000000001" width="1" height="26.62999999999988" fill="#d6d6dc" />
<rect x="1333.5" y="919.6600000000001" width="1" height="26.62999999999988" fill="#d6d6dc" />
<rect x="34.5" y="946.79" width="587.8" height="26.63000000000011" fill="#d3d3d4" />
<rect x="14.5" y="972.9200000000001" width="19" height="1.2" fill="#d2d2d6" />
<rect x="34.5" y="972.9200000000001" width="587.8" height="1.0" fill="#dcdcde" />
<rect x="622.3" y="972.9200000000001" width="711.7" height="1.0" fill="#d8d8dc" />
<rect x="72.1" y="946.79" width="1" height="26.63000000000011" fill="#dcdcde" />
<rect x="194.9" y="946.79" width="1" height="26.63000000000011" fill="#dcdcde" />
<rect x="311.1" y="946.79" width="1" height="26.63000000000011" fill="#dcdcde" />
<rect x="369.5" y="946.79" width="1" height="26.63000000000011" fill="#dcdcde" />
<rect x="621.8" y="946.79" width="1" height="26.63000000000011" fill="#d6d6dc" />
<rect x="686.1" y="946.79" width="1" height="26.63000000000011" fill="#d6d6dc" />
<rect x="1074.1" y="946.79" width="1" height="26.63000000000011" fill="#d6d6dc" />
<rect x="1333.5" y="946.79" width="1" height="26.63000000000011" fill="#d6d6dc" />
<rect x="34.5" y="973.9200000000001" width="587.8" height="26.62999999999988" fill="#d3d3d4" />
<rect x="14.5" y="1000.05" width="19" height="1.2" fill="#d2d2d6" />
<rect x="34.5" y="1000.05" width="587.8" height="1.0" fill="#dcdcde" />
<rect x="622.3" y="1000.05" width="711.7" height="1.0" fill="#d8d8dc" />
<rect x="72.1" y="973.9200000000001" width="1" height="26.62999999999988" fill="#dcdcde" />
<rect x="194.9" y="973.9200000000001" width="1" height="26.62999999999988" fill="#dcdcde" />
<rect x="311.1" y="973.9200000000001" width="1" height="26.62999999999988" fill="#dcdcde" />
<rect x="369.5" y="973.9200000000001" width="1" height="26.62999999999988" fill="#dcdcde" />
<rect x="621.8" y="973.9200000000001" width="1" height="26.62999999999988" fill="#d6d6dc" />
<rect x="686.1" y="973.9200000000001" width="1" height="26.62999999999988" fill="#d6d6dc" />
<rect x="1074.1" y="973.9200000000001" width="1" height="26.62999999999988" fill="#d6d6dc" />
<rect x="1333.5" y="973.9200000000001" width="1" height="26.62999999999988" fill="#d6d6dc" />
<rect x="34.5" y="1001.05" width="587.8" height="26.63000000000011" fill="#d3d3d4" />
<rect x="14.5" y="1027.18" width="19" height="1.2" fill="#d2d2d6" />
<rect x="34.5" y="1027.18" width="587.8" height="1.0" fill="#dcdcde" />
<rect x="622.3" y="1027.18" width="711.7" height="1.0" fill="#d8d8dc" />
<rect x="72.1" y="1001.05" width="1" height="26.63000000000011" fill="#dcdcde" />
<rect x="194.9" y="1001.05" width="1" height="26.63000000000011" fill="#dcdcde" />
<rect x="311.1" y="1001.05" width="1" height="26.63000000000011" fill="#dcdcde" />
<rect x="369.5" y="1001.05" width="1" height="26.63000000000011" fill="#dcdcde" />
<rect x="621.8" y="1001.05" width="1" height="26.63000000000011" fill="#d6d6dc" />
<rect x="686.1" y="1001.05" width="1" height="26.63000000000011" fill="#d6d6dc" />
<rect x="1074.1" y="1001.05" width="1" height="26.63000000000011" fill="#d6d6dc" />
<rect x="1333.5" y="1001.05" width="1" height="26.63000000000011" fill="#d6d6dc" />
<rect x="34.5" y="1028.18" width="587.8" height="26.62999999999988" fill="#d3d3d4" />
<rect x="14.5" y="1054.31" width="19" height="1.2" fill="#d2d2d6" />
<rect x="34.5" y="1054.31" width="587.8" height="1.0" fill="#dcdcde" />
<rect x="622.3" y="1054.31" width="711.7" height="1.0" fill="#d8d8dc" />
<rect x="72.1" y="1028.18" width="1" height="26.62999999999988" fill="#dcdcde" />
<rect x="194.9" y="1028.18" width="1" height="26.62999999999988" fill="#dcdcde" />
<rect x="311.1" y="1028.18" width="1" height="26.62999999999988" fill="#dcdcde" />
<rect x="369.5" y="1028.18" width="1" height="26.62999999999988" fill="#dcdcde" />
<rect x="621.8" y="1028.18" width="1" height="26.62999999999988" fill="#d6d6dc" />
<rect x="686.1" y="1028.18" width="1" height="26.62999999999988" fill="#d6d6dc" />
<rect x="1074.1" y="1028.18" width="1" height="26.62999999999988" fill="#d6d6dc" />
<rect x="1333.5" y="1028.18" width="1" height="26.62999999999988" fill="#d6d6dc" />
<rect x="13.1" y="264.2" width="1.4" height="770" fill="#a4a4ac" />
<rect x="33.4" y="291.3" width="1.1" height="740" fill="#cfcfd4" />
<rect x="1907.3" y="264.2" width="2.4" height="770" fill="#8e949a" />
<rect x="1909.7" y="264.2" width="4.6" height="770" fill="#e2e2e4" />
<rect x="13.3" y="263.9" width="1896.2" height="1.6" fill="#909096" />
<path d="M22 332 L27.2 336.6 L22 341.2 Z" fill="#111"/>
<rect x="1885.4" y="291.3" width="22.8" height="740" fill="#f6f6f8" />
<path d="M1892.2 305 L1896.1 300.2 L1900.0 305 Z" fill="#808086"/>
<rect x="1892" y="314.5" width="8.4" height="129.5" rx="4.2" fill="#e4e4e8" stroke="#a4a4aa" stroke-width="1.2"/>
<g>
<text x="872.00" y="28.00" font-size="19" font-weight="normal" fill="#0e2232" text-anchor="start" stroke="#0e2232" stroke-width="0.12" textLength="182.00" lengthAdjust="spacingAndGlyphs">Transfer Excel Config.</text>
<text x="1790.80" y="62.30" font-size="15" font-weight="bold" fill="#d21c1c" text-anchor="start" stroke="#d21c1c" stroke-width="0.12" textLength="66.80" lengthAdjust="spacingAndGlyphs">lblModify</text>
<text x="1867.30" y="62.30" font-size="15" font-weight="bold" fill="#d21c1c" text-anchor="start" stroke="#d21c1c" stroke-width="0.12" textLength="40.50" lengthAdjust="spacingAndGlyphs">Mode</text>
<text x="24.00" y="95.50" font-size="14" font-weight="normal" fill="#22222c" text-anchor="start" stroke="#22222c" stroke-width="0.12" textLength="79.50" lengthAdjust="spacingAndGlyphs">Format Code</text>
<text x="24.00" y="122.70" font-size="14" font-weight="normal" fill="#22222c" text-anchor="start" stroke="#22222c" stroke-width="0.12" textLength="68.00" lengthAdjust="spacingAndGlyphs">Description</text>
<text x="25.20" y="150.80" font-size="14" font-weight="normal" fill="#22222c" text-anchor="start" stroke="#22222c" stroke-width="0.12" textLength="22.90" lengthAdjust="spacingAndGlyphs">aou</text>
<text x="52.30" y="150.80" font-size="14" font-weight="normal" fill="#22222c" text-anchor="start" stroke="#22222c" stroke-width="0.12" textLength="34.40" lengthAdjust="spacingAndGlyphs">Detail</text>
<text x="91.90" y="150.80" font-size="14" font-weight="normal" fill="#22222c" text-anchor="start" stroke="#22222c" stroke-width="0.12" textLength="49.00" lengthAdjust="spacingAndGlyphs">ısuaun</text>
<text x="144.00" y="150.80" font-size="14" font-weight="normal" fill="#22222c" text-anchor="start" stroke="#22222c" stroke-width="0.12" textLength="26.50" lengthAdjust="spacingAndGlyphs">Row</text>
<text x="279.50" y="150.80" font-size="14" font-weight="normal" fill="#22222c" text-anchor="start" stroke="#22222c" stroke-width="0.12" textLength="63.50" lengthAdjust="spacingAndGlyphs">suııuunns</text>
<text x="346.80" y="150.80" font-size="14" font-weight="normal" fill="#22222c" text-anchor="start" stroke="#22222c" stroke-width="0.12" textLength="51.50" lengthAdjust="spacingAndGlyphs">Transfer</text>
<text x="491.00" y="122.50" font-size="14" font-weight="normal" fill="#22222c" text-anchor="start" stroke="#22222c" stroke-width="0.12" textLength="63.50" lengthAdjust="spacingAndGlyphs">suııuunns</text>
<text x="559.80" y="122.50" font-size="14" font-weight="normal" fill="#22222c" text-anchor="start" stroke="#22222c" stroke-width="0.12" textLength="103.70" lengthAdjust="spacingAndGlyphs">Transfer Product</text>
<text x="467.00" y="93.80" font-size="10" font-weight="bold" fill="#1a1a1a" text-anchor="start" stroke="#1a1a1a" stroke-width="0.12" textLength="10.00" lengthAdjust="spacingAndGlyphs">F4</text>
<text x="257.60" y="150.90" font-size="14" font-weight="normal" fill="#22222c" text-anchor="start" stroke="#22222c" stroke-width="0.12" textLength="7.40" lengthAdjust="spacingAndGlyphs">0</text>
<text x="48.60" y="184.60" font-size="14" font-weight="normal" fill="#22222c" text-anchor="start" stroke="#22222c" stroke-width="0.12" textLength="225.00" lengthAdjust="spacingAndGlyphs">Sum No.' Package from Detail to JOB</text>
<text x="48.60" y="216.90" font-size="14" font-weight="normal" fill="#22222c" text-anchor="start" stroke="#22222c" stroke-width="0.12" textLength="228.00" lengthAdjust="spacingAndGlyphs">Sum Gross Weight from Detail to JOB</text>
<text x="332.50" y="184.60" font-size="14" font-weight="normal" fill="#22222c" text-anchor="start" stroke="#22222c" stroke-width="0.12" textLength="215.50" lengthAdjust="spacingAndGlyphs">Sum Net Weight from Detail to JOB</text>
<text x="332.50" y="216.90" font-size="14" font-weight="normal" fill="#22222c" text-anchor="start" stroke="#22222c" stroke-width="0.12" textLength="174.00" lengthAdjust="spacingAndGlyphs">Sum Amount to Hdr. Invoice</text>
<text x="28.75" y="255.60" font-size="14" font-weight="normal" fill="#1a1a22" text-anchor="start" stroke="#1a1a22" stroke-width="0.12" textLength="20.25" lengthAdjust="spacingAndGlyphs">Job</text>
<text x="73.75" y="256.80" font-size="14" font-weight="normal" fill="#34343e" text-anchor="start" stroke="#34343e" stroke-width="0.12" textLength="36.50" lengthAdjust="spacingAndGlyphs">Job_3</text>
<text x="134.25" y="256.80" font-size="14" font-weight="normal" fill="#34343e" text-anchor="start" stroke="#34343e" stroke-width="0.12" textLength="54.75" lengthAdjust="spacingAndGlyphs">Job_Sum</text>
<text x="212.50" y="256.80" font-size="14" font-weight="normal" fill="#34343e" text-anchor="start" stroke="#34343e" stroke-width="0.12" textLength="29.00" lengthAdjust="spacingAndGlyphs">HInv</text>
<text x="265.80" y="256.80" font-size="14" font-weight="normal" fill="#34343e" text-anchor="start" stroke="#34343e" stroke-width="0.12" textLength="65.90" lengthAdjust="spacingAndGlyphs">HInv_Addr</text>
<text x="356.30" y="256.80" font-size="14" font-weight="normal" fill="#34343e" text-anchor="start" stroke="#34343e" stroke-width="0.12" textLength="27.50" lengthAdjust="spacingAndGlyphs">EInv</text>
<text x="407.80" y="256.80" font-size="14" font-weight="normal" fill="#34343e" text-anchor="start" stroke="#34343e" stroke-width="0.12" textLength="36.00" lengthAdjust="spacingAndGlyphs">EInv2</text>
<text x="468.00" y="256.80" font-size="14" font-weight="normal" fill="#34343e" text-anchor="start" stroke="#34343e" stroke-width="0.12" textLength="94.00" lengthAdjust="spacingAndGlyphs">luouqıanuun1</text>
<text x="586.00" y="256.80" font-size="14" font-weight="normal" fill="#34343e" text-anchor="start" stroke="#34343e" stroke-width="0.12" textLength="93.20" lengthAdjust="spacingAndGlyphs">luouqıanuun2</text>
<text x="703.60" y="256.80" font-size="14" font-weight="normal" fill="#34343e" text-anchor="start" stroke="#34343e" stroke-width="0.12" textLength="93.40" lengthAdjust="spacingAndGlyphs">luouqıanuun3</text>
<text x="821.00" y="256.80" font-size="14" font-weight="normal" fill="#34343e" text-anchor="start" stroke="#34343e" stroke-width="0.12" textLength="94.00" lengthAdjust="spacingAndGlyphs">luouqıanuun4</text>
<text x="938.80" y="256.80" font-size="14" font-weight="normal" fill="#34343e" text-anchor="start" stroke="#34343e" stroke-width="0.12" textLength="93.40" lengthAdjust="spacingAndGlyphs">luouqıanuun5</text>
<text x="1056.00" y="256.80" font-size="14" font-weight="normal" fill="#34343e" text-anchor="start" stroke="#34343e" stroke-width="0.12" textLength="93.40" lengthAdjust="spacingAndGlyphs">luouqıanuun6</text>
<text x="1172.90" y="256.80" font-size="14" font-weight="normal" fill="#34343e" text-anchor="start" stroke="#34343e" stroke-width="0.12" textLength="52.10" lengthAdjust="spacingAndGlyphs">Function</text>
<text x="50.20" y="282.70" font-size="14" font-weight="normal" fill="#20202a" text-anchor="start" stroke="#20202a" stroke-width="0.12" textLength="8.30" lengthAdjust="spacingAndGlyphs">#</text>
<text x="100.20" y="282.70" font-size="14" font-weight="normal" fill="#20202a" text-anchor="start" stroke="#20202a" stroke-width="0.12" textLength="66.70" lengthAdjust="spacingAndGlyphs">Field Name</text>
<text x="221.00" y="282.70" font-size="14" font-weight="normal" fill="#20202a" text-anchor="start" stroke="#20202a" stroke-width="0.12" textLength="63.60" lengthAdjust="spacingAndGlyphs">Field Type</text>
<text x="324.60" y="282.70" font-size="14" font-weight="normal" fill="#20202a" text-anchor="start" stroke="#20202a" stroke-width="0.12" textLength="30.80" lengthAdjust="spacingAndGlyphs">Type</text>
<text x="461.70" y="282.70" font-size="14" font-weight="normal" fill="#20202a" text-anchor="start" stroke="#20202a" stroke-width="0.12" textLength="68.40" lengthAdjust="spacingAndGlyphs">Description</text>
<text x="631.00" y="282.70" font-size="14" font-weight="normal" fill="#20202a" text-anchor="start" stroke="#20202a" stroke-width="0.12" textLength="45.00" lengthAdjust="spacingAndGlyphs">Column</text>
<text x="853.50" y="282.70" font-size="14" font-weight="normal" fill="#20202a" text-anchor="start" stroke="#20202a" stroke-width="0.12" textLength="52.50" lengthAdjust="spacingAndGlyphs">Function</text>
<text x="1181.00" y="282.70" font-size="14" font-weight="normal" fill="#20202a" text-anchor="start" stroke="#20202a" stroke-width="0.12" textLength="44.00" lengthAdjust="spacingAndGlyphs">Fix Cell</text>
<text x="53.90" y="341.31" font-size="14" font-weight="normal" fill="#1e1e28" text-anchor="middle" stroke="#1e1e28" stroke-width="0.12" textLength="6.78" lengthAdjust="spacingAndGlyphs">1</text>
<text x="78.20" y="341.31" font-size="14" font-weight="normal" fill="#1e1e28" text-anchor="start" stroke="#1e1e28" stroke-width="0.12" textLength="63.98" lengthAdjust="spacingAndGlyphs">COMCODE</text>
<text x="201.10" y="341.31" font-size="14" font-weight="normal" fill="#1e1e28" text-anchor="start" stroke="#1e1e28" stroke-width="0.12" textLength="87.05" lengthAdjust="spacingAndGlyphs">VARCHAR(15)</text>
<text x="340.50" y="341.31" font-size="14" font-weight="normal" fill="#1e1e28" text-anchor="middle" stroke="#1e1e28" stroke-width="0.12" textLength="8.13" lengthAdjust="spacingAndGlyphs">T</text>
<text x="375.60" y="341.31" font-size="14" font-weight="normal" fill="#1e1e28" text-anchor="start" stroke="#1e1e28" stroke-width="0.12" textLength="4.44" lengthAdjust="spacingAndGlyphs">-</text>
<text x="53.90" y="368.25" font-size="14" font-weight="normal" fill="#1e1e28" text-anchor="middle" stroke="#1e1e28" stroke-width="0.12" textLength="6.78" lengthAdjust="spacingAndGlyphs">2</text>
<text x="78.20" y="368.25" font-size="14" font-weight="normal" fill="#1e1e28" text-anchor="start" stroke="#1e1e28" stroke-width="0.12" textLength="42.21" lengthAdjust="spacingAndGlyphs">JOBNO</text>
<text x="201.10" y="368.25" font-size="14" font-weight="normal" fill="#1e1e28" text-anchor="start" stroke="#1e1e28" stroke-width="0.12" textLength="87.05" lengthAdjust="spacingAndGlyphs">VARCHAR(20)</text>
<text x="340.50" y="368.25" font-size="14" font-weight="normal" fill="#1e1e28" text-anchor="middle" stroke="#1e1e28" stroke-width="0.12" textLength="8.13" lengthAdjust="spacingAndGlyphs">T</text>
<text x="375.60" y="368.25" font-size="14" font-weight="normal" fill="#1e1e28" text-anchor="start" stroke="#1e1e28" stroke-width="0.12" textLength="4.44" lengthAdjust="spacingAndGlyphs">-</text>
<text x="53.90" y="395.38" font-size="14" font-weight="normal" fill="#1e1e28" text-anchor="middle" stroke="#1e1e28" stroke-width="0.12" textLength="6.78" lengthAdjust="spacingAndGlyphs">3</text>
<text x="78.20" y="395.38" font-size="14" font-weight="normal" fill="#1e1e28" text-anchor="start" stroke="#1e1e28" stroke-width="0.12" textLength="68.74" lengthAdjust="spacingAndGlyphs">CUSREFNO</text>
<text x="201.10" y="395.38" font-size="14" font-weight="normal" fill="#1e1e28" text-anchor="start" stroke="#1e1e28" stroke-width="0.12" textLength="94.40" lengthAdjust="spacingAndGlyphs">VARCHAR(255)</text>
<text x="340.50" y="395.38" font-size="14" font-weight="normal" fill="#1e1e28" text-anchor="middle" stroke="#1e1e28" stroke-width="0.12" textLength="8.13" lengthAdjust="spacingAndGlyphs">T</text>
<text x="375.60" y="395.38" font-size="14" font-weight="normal" fill="#1e1e28" text-anchor="start" stroke="#1e1e28" stroke-width="0.12" textLength="84.90" lengthAdjust="spacingAndGlyphs">Custom Ref.1</text>
<text x="53.90" y="422.50" font-size="14" font-weight="normal" fill="#1e1e28" text-anchor="middle" stroke="#1e1e28" stroke-width="0.12" textLength="6.78" lengthAdjust="spacingAndGlyphs">4</text>
<text x="78.20" y="422.50" font-size="14" font-weight="normal" fill="#1e1e28" text-anchor="start" stroke="#1e1e28" stroke-width="0.12" textLength="55.59" lengthAdjust="spacingAndGlyphs">JOBDATE</text>
<text x="201.10" y="422.50" font-size="14" font-weight="normal" fill="#1e1e28" text-anchor="start" stroke="#1e1e28" stroke-width="0.12" textLength="79.71" lengthAdjust="spacingAndGlyphs">VARCHAR(8)</text>
<text x="340.50" y="422.50" font-size="14" font-weight="normal" fill="#1e1e28" text-anchor="middle" stroke="#1e1e28" stroke-width="0.12" textLength="9.62" lengthAdjust="spacingAndGlyphs">D</text>
<text x="375.60" y="422.50" font-size="14" font-weight="normal" fill="#1e1e28" text-anchor="start" stroke="#1e1e28" stroke-width="0.12" textLength="51.40" lengthAdjust="spacingAndGlyphs">ouu Job</text>
<text x="53.90" y="449.63" font-size="14" font-weight="normal" fill="#1e1e28" text-anchor="middle" stroke="#1e1e28" stroke-width="0.12" textLength="6.78" lengthAdjust="spacingAndGlyphs">5</text>
<text x="78.20" y="449.63" font-size="14" font-weight="normal" fill="#1e1e28" text-anchor="start" stroke="#1e1e28" stroke-width="0.12" textLength="84.41" lengthAdjust="spacingAndGlyphs">XDECLARENO</text>
<text x="201.10" y="449.63" font-size="14" font-weight="normal" fill="#1e1e28" text-anchor="start" stroke="#1e1e28" stroke-width="0.12" textLength="87.05" lengthAdjust="spacingAndGlyphs">VARCHAR(20)</text>
<text x="340.50" y="449.63" font-size="14" font-weight="normal" fill="#1e1e28" text-anchor="middle" stroke="#1e1e28" stroke-width="0.12" textLength="8.13" lengthAdjust="spacingAndGlyphs">T</text>
<text x="375.60" y="449.63" font-size="14" font-weight="normal" fill="#1e1e28" text-anchor="start" stroke="#1e1e28" stroke-width="0.12" textLength="4.44" lengthAdjust="spacingAndGlyphs">-</text>
<text x="53.90" y="476.77" font-size="14" font-weight="normal" fill="#1e1e28" text-anchor="middle" stroke="#1e1e28" stroke-width="0.12" textLength="6.78" lengthAdjust="spacingAndGlyphs">6</text>
<text x="78.20" y="476.77" font-size="14" font-weight="normal" fill="#1e1e28" text-anchor="start" stroke="#1e1e28" stroke-width="0.12" textLength="55.60" lengthAdjust="spacingAndGlyphs">DCLTYPE</text>
<text x="201.10" y="476.77" font-size="14" font-weight="normal" fill="#1e1e28" text-anchor="start" stroke="#1e1e28" stroke-width="0.12" textLength="79.71" lengthAdjust="spacingAndGlyphs">VARCHAR(7)</text>
<text x="340.50" y="476.77" font-size="14" font-weight="normal" fill="#1e1e28" text-anchor="middle" stroke="#1e1e28" stroke-width="0.12" textLength="8.13" lengthAdjust="spacingAndGlyphs">T</text>
<text x="375.60" y="476.77" font-size="14" font-weight="normal" fill="#1e1e28" text-anchor="start" stroke="#1e1e28" stroke-width="0.12" textLength="4.44" lengthAdjust="spacingAndGlyphs">-</text>
<text x="53.90" y="503.90" font-size="14" font-weight="normal" fill="#1e1e28" text-anchor="middle" stroke="#1e1e28" stroke-width="0.12" textLength="6.78" lengthAdjust="spacingAndGlyphs">7</text>
<text x="78.20" y="503.90" font-size="14" font-weight="normal" fill="#1e1e28" text-anchor="start" stroke="#1e1e28" stroke-width="0.12" textLength="59.23" lengthAdjust="spacingAndGlyphs">DOCTYPE</text>
<text x="201.10" y="503.90" font-size="14" font-weight="normal" fill="#1e1e28" text-anchor="start" stroke="#1e1e28" stroke-width="0.12" textLength="79.71" lengthAdjust="spacingAndGlyphs">VARCHAR(1)</text>
<text x="340.50" y="503.90" font-size="14" font-weight="normal" fill="#1e1e28" text-anchor="middle" stroke="#1e1e28" stroke-width="0.12" textLength="8.13" lengthAdjust="spacingAndGlyphs">T</text>
<text x="375.60" y="503.90" font-size="14" font-weight="normal" fill="#1e1e28" text-anchor="start" stroke="#1e1e28" stroke-width="0.12" textLength="96.90" lengthAdjust="spacingAndGlyphs">vuouosıonaıs</text>
<text x="53.90" y="531.03" font-size="14" font-weight="normal" fill="#1e1e28" text-anchor="middle" stroke="#1e1e28" stroke-width="0.12" textLength="6.78" lengthAdjust="spacingAndGlyphs">8</text>
<text x="78.20" y="531.03" font-size="14" font-weight="normal" fill="#1e1e28" text-anchor="start" stroke="#1e1e28" stroke-width="0.12" textLength="36.76" lengthAdjust="spacingAndGlyphs">SIGN2</text>
<text x="201.10" y="531.03" font-size="14" font-weight="normal" fill="#1e1e28" text-anchor="start" stroke="#1e1e28" stroke-width="0.12" textLength="79.71" lengthAdjust="spacingAndGlyphs">VARCHAR(1)</text>
<text x="340.50" y="531.03" font-size="14" font-weight="normal" fill="#1e1e28" text-anchor="middle" stroke="#1e1e28" stroke-width="0.12" textLength="8.13" lengthAdjust="spacingAndGlyphs">T</text>
<text x="375.60" y="531.03" font-size="14" font-weight="normal" fill="#1e1e28" text-anchor="start" stroke="#1e1e28" stroke-width="0.12" textLength="4.44" lengthAdjust="spacingAndGlyphs">-</text>
<text x="53.90" y="558.15" font-size="14" font-weight="normal" fill="#1e1e28" text-anchor="middle" stroke="#1e1e28" stroke-width="0.12" textLength="6.78" lengthAdjust="spacingAndGlyphs">9</text>
<text x="78.20" y="558.15" font-size="14" font-weight="normal" fill="#1e1e28" text-anchor="start" stroke="#1e1e28" stroke-width="0.12" textLength="101.21" lengthAdjust="spacingAndGlyphs">EXPORTERSEND</text>
<text x="201.10" y="558.15" font-size="14" font-weight="normal" fill="#1e1e28" text-anchor="start" stroke="#1e1e28" stroke-width="0.12" textLength="79.71" lengthAdjust="spacingAndGlyphs">VARCHAR(1)</text>
<text x="340.50" y="558.15" font-size="14" font-weight="normal" fill="#1e1e28" text-anchor="middle" stroke="#1e1e28" stroke-width="0.12" textLength="8.13" lengthAdjust="spacingAndGlyphs">T</text>
<text x="375.60" y="558.15" font-size="14" font-weight="normal" fill="#1e1e28" text-anchor="start" stroke="#1e1e28" stroke-width="0.12" textLength="4.44" lengthAdjust="spacingAndGlyphs">-</text>
<text x="53.90" y="585.29" font-size="14" font-weight="normal" fill="#1e1e28" text-anchor="middle" stroke="#1e1e28" stroke-width="0.12" textLength="13.55" lengthAdjust="spacingAndGlyphs">10</text>
<text x="78.20" y="585.29" font-size="14" font-weight="normal" fill="#1e1e28" text-anchor="start" stroke="#1e1e28" stroke-width="0.12" textLength="70.11" lengthAdjust="spacingAndGlyphs">BROKERRG</text>
<text x="201.10" y="585.29" font-size="14" font-weight="normal" fill="#1e1e28" text-anchor="start" stroke="#1e1e28" stroke-width="0.12" textLength="79.71" lengthAdjust="spacingAndGlyphs">VARCHAR(1)</text>
<text x="340.50" y="585.29" font-size="14" font-weight="normal" fill="#1e1e28" text-anchor="middle" stroke="#1e1e28" stroke-width="0.12" textLength="8.13" lengthAdjust="spacingAndGlyphs">T</text>
<text x="375.60" y="585.29" font-size="14" font-weight="normal" fill="#1e1e28" text-anchor="start" stroke="#1e1e28" stroke-width="0.12" textLength="4.44" lengthAdjust="spacingAndGlyphs">-</text>
<text x="53.90" y="612.41" font-size="14" font-weight="normal" fill="#1e1e28" text-anchor="middle" stroke="#1e1e28" stroke-width="0.12" textLength="12.66" lengthAdjust="spacingAndGlyphs">11</text>
<text x="78.20" y="612.41" font-size="14" font-weight="normal" fill="#1e1e28" text-anchor="start" stroke="#1e1e28" stroke-width="0.12" textLength="67.17" lengthAdjust="spacingAndGlyphs">EXPORTER</text>
<text x="201.10" y="612.41" font-size="14" font-weight="normal" fill="#1e1e28" text-anchor="start" stroke="#1e1e28" stroke-width="0.12" textLength="87.05" lengthAdjust="spacingAndGlyphs">VARCHAR(50)</text>
<text x="340.50" y="612.41" font-size="14" font-weight="normal" fill="#1e1e28" text-anchor="middle" stroke="#1e1e28" stroke-width="0.12" textLength="8.13" lengthAdjust="spacingAndGlyphs">T</text>
<text x="375.60" y="612.41" font-size="14" font-weight="normal" fill="#1e1e28" text-anchor="start" stroke="#1e1e28" stroke-width="0.12" textLength="75.90" lengthAdjust="spacingAndGlyphs">swawasoon</text>
<text x="53.90" y="639.55" font-size="14" font-weight="normal" fill="#1e1e28" text-anchor="middle" stroke="#1e1e28" stroke-width="0.12" textLength="13.55" lengthAdjust="spacingAndGlyphs">12</text>
<text x="78.20" y="639.55" font-size="14" font-weight="normal" fill="#1e1e28" text-anchor="start" stroke="#1e1e28" stroke-width="0.12" textLength="82.59" lengthAdjust="spacingAndGlyphs">OTHERPARTY</text>
<text x="201.10" y="639.55" font-size="14" font-weight="normal" fill="#1e1e28" text-anchor="start" stroke="#1e1e28" stroke-width="0.12" textLength="87.05" lengthAdjust="spacingAndGlyphs">VARCHAR(20)</text>
<text x="340.50" y="639.55" font-size="14" font-weight="normal" fill="#1e1e28" text-anchor="middle" stroke="#1e1e28" stroke-width="0.12" textLength="8.13" lengthAdjust="spacingAndGlyphs">T</text>
<text x="375.60" y="639.55" font-size="14" font-weight="normal" fill="#1e1e28" text-anchor="start" stroke="#1e1e28" stroke-width="0.12" textLength="66.50" lengthAdjust="spacingAndGlyphs">swawoıoıs</text>
<text x="53.90" y="666.67" font-size="14" font-weight="normal" fill="#1e1e28" text-anchor="middle" stroke="#1e1e28" stroke-width="0.12" textLength="13.55" lengthAdjust="spacingAndGlyphs">13</text>
<text x="78.20" y="666.67" font-size="14" font-weight="normal" fill="#1e1e28" text-anchor="start" stroke="#1e1e28" stroke-width="0.12" textLength="66.72" lengthAdjust="spacingAndGlyphs">EX_ENAME</text>
<text x="201.10" y="666.67" font-size="14" font-weight="normal" fill="#1e1e28" text-anchor="start" stroke="#1e1e28" stroke-width="0.12" textLength="87.05" lengthAdjust="spacingAndGlyphs">VARCHAR(70)</text>
<text x="340.50" y="666.67" font-size="14" font-weight="normal" fill="#1e1e28" text-anchor="middle" stroke="#1e1e28" stroke-width="0.12" textLength="8.13" lengthAdjust="spacingAndGlyphs">T</text>
<text x="375.60" y="666.67" font-size="14" font-weight="normal" fill="#1e1e28" text-anchor="start" stroke="#1e1e28" stroke-width="0.12" textLength="103.10" lengthAdjust="spacingAndGlyphs">vowasoon(Eng)</text>
<text x="53.90" y="693.81" font-size="14" font-weight="normal" fill="#1e1e28" text-anchor="middle" stroke="#1e1e28" stroke-width="0.12" textLength="13.55" lengthAdjust="spacingAndGlyphs">14</text>
<text x="78.20" y="693.81" font-size="14" font-weight="normal" fill="#1e1e28" text-anchor="start" stroke="#1e1e28" stroke-width="0.12" textLength="72.86" lengthAdjust="spacingAndGlyphs">EX_EADDR1</text>
<text x="201.10" y="693.81" font-size="14" font-weight="normal" fill="#1e1e28" text-anchor="start" stroke="#1e1e28" stroke-width="0.12" textLength="94.40" lengthAdjust="spacingAndGlyphs">VARCHAR(100)</text>
<text x="340.50" y="693.81" font-size="14" font-weight="normal" fill="#1e1e28" text-anchor="middle" stroke="#1e1e28" stroke-width="0.12" textLength="8.13" lengthAdjust="spacingAndGlyphs">T</text>
<text x="375.60" y="693.81" font-size="14" font-weight="normal" fill="#1e1e28" text-anchor="start" stroke="#1e1e28" stroke-width="0.12" textLength="135.90" lengthAdjust="spacingAndGlyphs">nouuoswasoon(Eng)</text>
<text x="53.90" y="720.93" font-size="14" font-weight="normal" fill="#1e1e28" text-anchor="middle" stroke="#1e1e28" stroke-width="0.12" textLength="13.55" lengthAdjust="spacingAndGlyphs">15</text>
<text x="78.20" y="720.93" font-size="14" font-weight="normal" fill="#1e1e28" text-anchor="start" stroke="#1e1e28" stroke-width="0.12" textLength="72.86" lengthAdjust="spacingAndGlyphs">EX_EADDR2</text>
<text x="201.10" y="720.93" font-size="14" font-weight="normal" fill="#1e1e28" text-anchor="start" stroke="#1e1e28" stroke-width="0.12" textLength="94.40" lengthAdjust="spacingAndGlyphs">VARCHAR(100)</text>
<text x="340.50" y="720.93" font-size="14" font-weight="normal" fill="#1e1e28" text-anchor="middle" stroke="#1e1e28" stroke-width="0.12" textLength="8.13" lengthAdjust="spacingAndGlyphs">T</text>
<text x="375.60" y="720.93" font-size="14" font-weight="normal" fill="#1e1e28" text-anchor="start" stroke="#1e1e28" stroke-width="0.12" textLength="142.40" lengthAdjust="spacingAndGlyphs">nıuauoswasoon(Eng)</text>
<text x="53.90" y="748.07" font-size="14" font-weight="normal" fill="#1e1e28" text-anchor="middle" stroke="#1e1e28" stroke-width="0.12" textLength="13.55" lengthAdjust="spacingAndGlyphs">16</text>
<text x="78.20" y="748.07" font-size="14" font-weight="normal" fill="#1e1e28" text-anchor="start" stroke="#1e1e28" stroke-width="0.12" textLength="72.86" lengthAdjust="spacingAndGlyphs">EX_EADDR3</text>
<text x="201.10" y="748.07" font-size="14" font-weight="normal" fill="#1e1e28" text-anchor="start" stroke="#1e1e28" stroke-width="0.12" textLength="94.40" lengthAdjust="spacingAndGlyphs">VARCHAR(100)</text>
<text x="340.50" y="748.07" font-size="14" font-weight="normal" fill="#1e1e28" text-anchor="middle" stroke="#1e1e28" stroke-width="0.12" textLength="8.13" lengthAdjust="spacingAndGlyphs">T</text>
<text x="375.60" y="748.07" font-size="14" font-weight="normal" fill="#1e1e28" text-anchor="start" stroke="#1e1e28" stroke-width="0.12" textLength="147.40" lengthAdjust="spacingAndGlyphs">oıunouoswasoon(Eng)</text>
<text x="53.90" y="775.19" font-size="14" font-weight="normal" fill="#1e1e28" text-anchor="middle" stroke="#1e1e28" stroke-width="0.12" textLength="13.55" lengthAdjust="spacingAndGlyphs">17</text>
<text x="78.20" y="775.19" font-size="14" font-weight="normal" fill="#1e1e28" text-anchor="start" stroke="#1e1e28" stroke-width="0.12" textLength="72.86" lengthAdjust="spacingAndGlyphs">EX_EADDR4</text>
<text x="201.10" y="775.19" font-size="14" font-weight="normal" fill="#1e1e28" text-anchor="start" stroke="#1e1e28" stroke-width="0.12" textLength="94.40" lengthAdjust="spacingAndGlyphs">VARCHAR(100)</text>
<text x="340.50" y="775.19" font-size="14" font-weight="normal" fill="#1e1e28" text-anchor="middle" stroke="#1e1e28" stroke-width="0.12" textLength="8.13" lengthAdjust="spacingAndGlyphs">T</text>
<text x="375.60" y="775.19" font-size="14" font-weight="normal" fill="#1e1e28" text-anchor="start" stroke="#1e1e28" stroke-width="0.12" textLength="165.80" lengthAdjust="spacingAndGlyphs">vooswooouoswasoon(Eng)</text>
<text x="53.90" y="802.33" font-size="14" font-weight="normal" fill="#1e1e28" text-anchor="middle" stroke="#1e1e28" stroke-width="0.12" textLength="13.55" lengthAdjust="spacingAndGlyphs">18</text>
<text x="78.20" y="802.33" font-size="14" font-weight="normal" fill="#1e1e28" text-anchor="start" stroke="#1e1e28" stroke-width="0.12" textLength="66.04" lengthAdjust="spacingAndGlyphs">EX_TNAME</text>
<text x="201.10" y="802.33" font-size="14" font-weight="normal" fill="#1e1e28" text-anchor="start" stroke="#1e1e28" stroke-width="0.12" textLength="94.40" lengthAdjust="spacingAndGlyphs">VARCHAR(120)</text>
<text x="340.50" y="802.33" font-size="14" font-weight="normal" fill="#1e1e28" text-anchor="middle" stroke="#1e1e28" stroke-width="0.12" textLength="8.13" lengthAdjust="spacingAndGlyphs">T</text>
<text x="375.60" y="802.33" font-size="14" font-weight="normal" fill="#1e1e28" text-anchor="start" stroke="#1e1e28" stroke-width="0.12" textLength="105.70" lengthAdjust="spacingAndGlyphs">vowasoon(ınu)</text>
<text x="53.90" y="829.45" font-size="14" font-weight="normal" fill="#1e1e28" text-anchor="middle" stroke="#1e1e28" stroke-width="0.12" textLength="13.55" lengthAdjust="spacingAndGlyphs">19</text>
<text x="78.20" y="829.45" font-size="14" font-weight="normal" fill="#1e1e28" text-anchor="start" stroke="#1e1e28" stroke-width="0.12" textLength="71.26" lengthAdjust="spacingAndGlyphs">EX_TADDR1</text>
<text x="201.10" y="829.45" font-size="14" font-weight="normal" fill="#1e1e28" text-anchor="start" stroke="#1e1e28" stroke-width="0.12" textLength="94.40" lengthAdjust="spacingAndGlyphs">VARCHAR(100)</text>
<text x="340.50" y="829.45" font-size="14" font-weight="normal" fill="#1e1e28" text-anchor="middle" stroke="#1e1e28" stroke-width="0.12" textLength="8.13" lengthAdjust="spacingAndGlyphs">T</text>
<text x="375.60" y="829.45" font-size="14" font-weight="normal" fill="#1e1e28" text-anchor="start" stroke="#1e1e28" stroke-width="0.12" textLength="138.40" lengthAdjust="spacingAndGlyphs">nouuoswasoon(ınu)</text>
<text x="53.90" y="856.59" font-size="14" font-weight="normal" fill="#1e1e28" text-anchor="middle" stroke="#1e1e28" stroke-width="0.12" textLength="13.55" lengthAdjust="spacingAndGlyphs">20</text>
<text x="78.20" y="856.59" font-size="14" font-weight="normal" fill="#1e1e28" text-anchor="start" stroke="#1e1e28" stroke-width="0.12" textLength="71.26" lengthAdjust="spacingAndGlyphs">EX_TADDR2</text>
<text x="201.10" y="856.59" font-size="14" font-weight="normal" fill="#1e1e28" text-anchor="start" stroke="#1e1e28" stroke-width="0.12" textLength="94.40" lengthAdjust="spacingAndGlyphs">VARCHAR(100)</text>
<text x="340.50" y="856.59" font-size="14" font-weight="normal" fill="#1e1e28" text-anchor="middle" stroke="#1e1e28" stroke-width="0.12" textLength="8.13" lengthAdjust="spacingAndGlyphs">T</text>
<text x="375.60" y="856.59" font-size="14" font-weight="normal" fill="#1e1e28" text-anchor="start" stroke="#1e1e28" stroke-width="0.12" textLength="144.90" lengthAdjust="spacingAndGlyphs">nıuauoswasoon(ınu)</text>
<text x="53.90" y="883.72" font-size="14" font-weight="normal" fill="#1e1e28" text-anchor="middle" stroke="#1e1e28" stroke-width="0.12" textLength="13.55" lengthAdjust="spacingAndGlyphs">21</text>
<text x="78.20" y="883.72" font-size="14" font-weight="normal" fill="#1e1e28" text-anchor="start" stroke="#1e1e28" stroke-width="0.12" textLength="71.26" lengthAdjust="spacingAndGlyphs">EX_TADDR3</text>
<text x="201.10" y="883.72" font-size="14" font-weight="normal" fill="#1e1e28" text-anchor="start" stroke="#1e1e28" stroke-width="0.12" textLength="94.40" lengthAdjust="spacingAndGlyphs">VARCHAR(100)</text>
<text x="340.50" y="883.72" font-size="14" font-weight="normal" fill="#1e1e28" text-anchor="middle" stroke="#1e1e28" stroke-width="0.12" textLength="8.13" lengthAdjust="spacingAndGlyphs">T</text>
<text x="375.60" y="883.72" font-size="14" font-weight="normal" fill="#1e1e28" text-anchor="start" stroke="#1e1e28" stroke-width="0.12" textLength="150.70" lengthAdjust="spacingAndGlyphs">oıunouoswasoon(ınu)</text>
<text x="53.90" y="910.85" font-size="14" font-weight="normal" fill="#1e1e28" text-anchor="middle" stroke="#1e1e28" stroke-width="0.12" textLength="13.55" lengthAdjust="spacingAndGlyphs">22</text>
<text x="78.20" y="910.85" font-size="14" font-weight="normal" fill="#1e1e28" text-anchor="start" stroke="#1e1e28" stroke-width="0.12" textLength="71.26" lengthAdjust="spacingAndGlyphs">EX_TADDR4</text>
<text x="201.10" y="910.85" font-size="14" font-weight="normal" fill="#1e1e28" text-anchor="start" stroke="#1e1e28" stroke-width="0.12" textLength="94.40" lengthAdjust="spacingAndGlyphs">VARCHAR(100)</text>
<text x="340.50" y="910.85" font-size="14" font-weight="normal" fill="#1e1e28" text-anchor="middle" stroke="#1e1e28" stroke-width="0.12" textLength="8.13" lengthAdjust="spacingAndGlyphs">T</text>
<text x="375.60" y="910.85" font-size="14" font-weight="normal" fill="#1e1e28" text-anchor="start" stroke="#1e1e28" stroke-width="0.12" textLength="168.40" lengthAdjust="spacingAndGlyphs">vooswooouoswasoon(ınu)</text>
<text x="53.90" y="937.98" font-size="14" font-weight="normal" fill="#1e1e28" text-anchor="middle" stroke="#1e1e28" stroke-width="0.12" textLength="13.55" lengthAdjust="spacingAndGlyphs">23</text>
<text x="78.20" y="937.98" font-size="14" font-weight="normal" fill="#1e1e28" text-anchor="start" stroke="#1e1e28" stroke-width="0.12" textLength="77.62" lengthAdjust="spacingAndGlyphs">EX_ZIPCODE</text>
<text x="201.10" y="937.98" font-size="14" font-weight="normal" fill="#1e1e28" text-anchor="start" stroke="#1e1e28" stroke-width="0.12" textLength="87.05" lengthAdjust="spacingAndGlyphs">VARCHAR(10)</text>
<text x="340.50" y="937.98" font-size="14" font-weight="normal" fill="#1e1e28" text-anchor="middle" stroke="#1e1e28" stroke-width="0.12" textLength="8.13" lengthAdjust="spacingAndGlyphs">T</text>
<text x="375.60" y="937.98" font-size="14" font-weight="normal" fill="#1e1e28" text-anchor="start" stroke="#1e1e28" stroke-width="0.12" textLength="152.90" lengthAdjust="spacingAndGlyphs">swaıusuaauuoswasoon</text>
<text x="53.90" y="965.11" font-size="14" font-weight="normal" fill="#1e1e28" text-anchor="middle" stroke="#1e1e28" stroke-width="0.12" textLength="13.55" lengthAdjust="spacingAndGlyphs">24</text>
<text x="78.20" y="965.11" font-size="14" font-weight="normal" fill="#1e1e28" text-anchor="start" stroke="#1e1e28" stroke-width="0.12" textLength="45.62" lengthAdjust="spacingAndGlyphs">EX_TEL</text>
<text x="201.10" y="965.11" font-size="14" font-weight="normal" fill="#1e1e28" text-anchor="start" stroke="#1e1e28" stroke-width="0.12" textLength="87.05" lengthAdjust="spacingAndGlyphs">VARCHAR(35)</text>
<text x="340.50" y="965.11" font-size="14" font-weight="normal" fill="#1e1e28" text-anchor="middle" stroke="#1e1e28" stroke-width="0.12" textLength="8.13" lengthAdjust="spacingAndGlyphs">T</text>
<text x="375.60" y="965.11" font-size="14" font-weight="normal" fill="#1e1e28" text-anchor="start" stroke="#1e1e28" stroke-width="0.12" textLength="17.40" lengthAdjust="spacingAndGlyphs">Tel</text>
<text x="53.90" y="992.24" font-size="14" font-weight="normal" fill="#1e1e28" text-anchor="middle" stroke="#1e1e28" stroke-width="0.12" textLength="13.55" lengthAdjust="spacingAndGlyphs">25</text>
<text x="78.20" y="992.24" font-size="14" font-weight="normal" fill="#1e1e28" text-anchor="start" stroke="#1e1e28" stroke-width="0.12" textLength="46.31" lengthAdjust="spacingAndGlyphs">EX_FAX</text>
<text x="201.10" y="992.24" font-size="14" font-weight="normal" fill="#1e1e28" text-anchor="start" stroke="#1e1e28" stroke-width="0.12" textLength="87.05" lengthAdjust="spacingAndGlyphs">VARCHAR(35)</text>
<text x="340.50" y="992.24" font-size="14" font-weight="normal" fill="#1e1e28" text-anchor="middle" stroke="#1e1e28" stroke-width="0.12" textLength="8.13" lengthAdjust="spacingAndGlyphs">T</text>
<text x="375.60" y="992.24" font-size="14" font-weight="normal" fill="#1e1e28" text-anchor="start" stroke="#1e1e28" stroke-width="0.12" textLength="22.30" lengthAdjust="spacingAndGlyphs">Fax</text>
<text x="53.90" y="1019.37" font-size="14" font-weight="normal" fill="#1e1e28" text-anchor="middle" stroke="#1e1e28" stroke-width="0.12" textLength="13.55" lengthAdjust="spacingAndGlyphs">26</text>
<text x="78.20" y="1019.37" font-size="14" font-weight="normal" fill="#1e1e28" text-anchor="start" stroke="#1e1e28" stroke-width="0.12" textLength="74.89" lengthAdjust="spacingAndGlyphs">EX_BRANCH</text>
<text x="201.10" y="1019.37" font-size="14" font-weight="normal" fill="#1e1e28" text-anchor="start" stroke="#1e1e28" stroke-width="0.12" textLength="79.71" lengthAdjust="spacingAndGlyphs">VARCHAR(6)</text>
<text x="340.50" y="1019.37" font-size="14" font-weight="normal" fill="#1e1e28" text-anchor="middle" stroke="#1e1e28" stroke-width="0.12" textLength="8.13" lengthAdjust="spacingAndGlyphs">T</text>
<text x="375.60" y="1019.37" font-size="14" font-weight="normal" fill="#1e1e28" text-anchor="start" stroke="#1e1e28" stroke-width="0.12" textLength="225.20" lengthAdjust="spacingAndGlyphs">aıouunouuosusunwasoon(Branch)</text>
<text x="53.90" y="1046.49" font-size="14" font-weight="normal" fill="#1e1e28" text-anchor="middle" stroke="#1e1e28" stroke-width="0.12" textLength="13.55" lengthAdjust="spacingAndGlyphs">27</text>
<text x="78.20" y="1046.49" font-size="14" font-weight="normal" fill="#1e1e28" text-anchor="start" stroke="#1e1e28" stroke-width="0.12" textLength="58.56" lengthAdjust="spacingAndGlyphs">EX_CODE</text>
<text x="201.10" y="1046.49" font-size="14" font-weight="normal" fill="#1e1e28" text-anchor="start" stroke="#1e1e28" stroke-width="0.12" textLength="79.71" lengthAdjust="spacingAndGlyphs">VARCHAR(6)</text>
<text x="340.50" y="1046.49" font-size="14" font-weight="normal" fill="#1e1e28" text-anchor="middle" stroke="#1e1e28" stroke-width="0.12" textLength="8.13" lengthAdjust="spacingAndGlyphs">T</text>
<text x="375.60" y="1046.49" font-size="14" font-weight="normal" fill="#1e1e28" text-anchor="start" stroke="#1e1e28" stroke-width="0.12" textLength="4.44" lengthAdjust="spacingAndGlyphs">-</text>
</g>
</svg>
</body></html>
